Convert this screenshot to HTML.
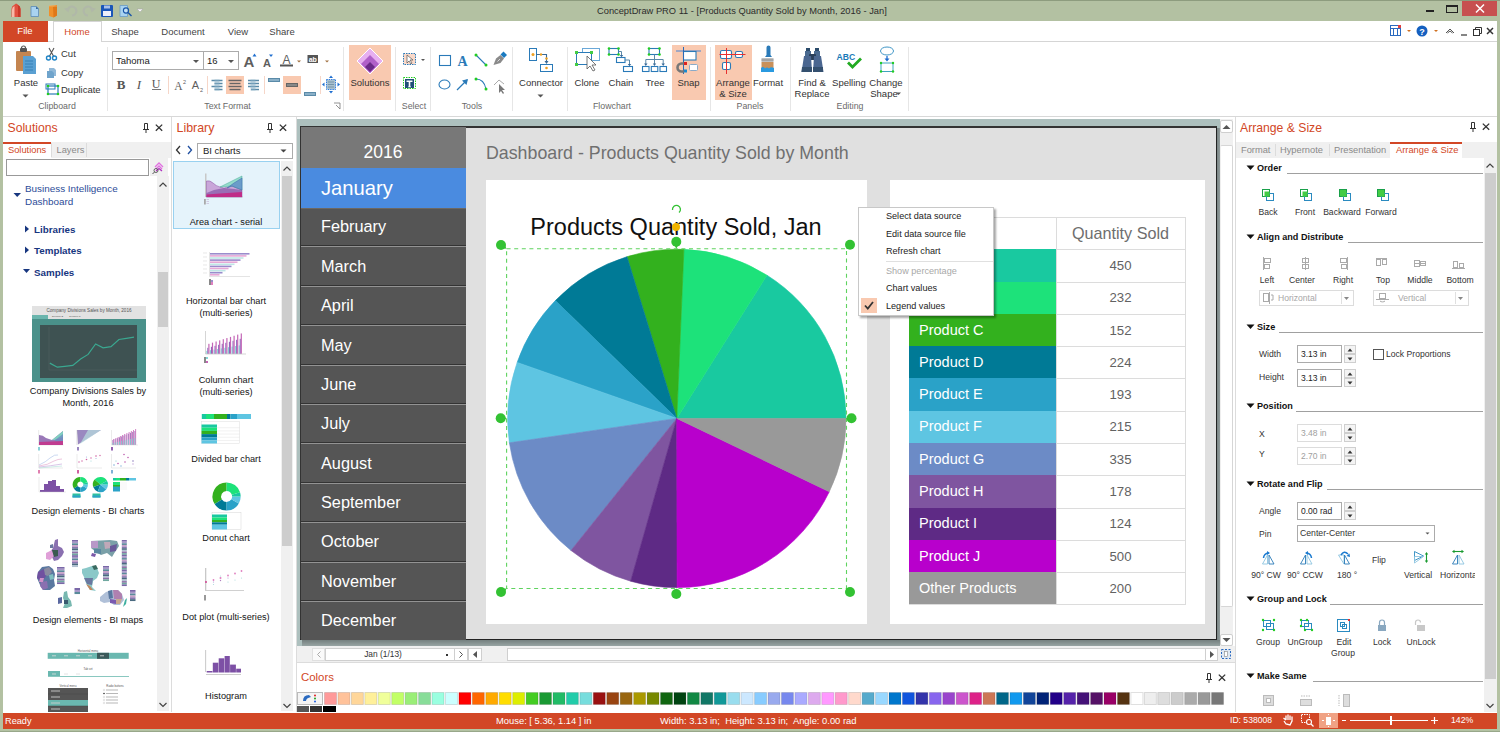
<!DOCTYPE html><html><head><meta charset="utf-8"><style>
*{margin:0;padding:0;box-sizing:border-box}
html,body{width:1500px;height:732px;overflow:hidden;background:#fff;font-family:"Liberation Sans",sans-serif}
.a{position:absolute}
.t{position:absolute;white-space:nowrap;font-family:"Liberation Sans",sans-serif}
svg{position:absolute;overflow:visible}
</style></head><body>
<div class="a" style="left:0px;top:0px;width:1500px;height:732px;background:#b3c1a2"></div>
<div class="a" style="left:0px;top:0px;width:1500px;height:1px;background:#8d9c7e"></div>
<div class="t" style="left:597px;top:5.0px;font-size:9.3px;line-height:12px;color:#2b2b2b;text-align:left;">ConceptDraw PRO 11 - [Products Quantity Sold by Month, 2016 - Jan]</div>
<div class="a" style="left:1426px;top:10px;width:8px;height:2px;background:#222"></div>
<div class="a" style="left:1446px;top:5px;width:12px;height:8px;border:1px solid #222;border-top-width:2px"></div>
<div class="a" style="left:1462px;top:1px;width:35px;height:15px;background:#c75050"></div>
<svg style="left:1475px;top:4px" width="10" height="9"><path fill="none" d="M1 0.5L9 8.5M9 0.5L1 8.5" stroke="#fff" stroke-width="1.5"/></svg>
<div class="a" style="left:3px;top:21px;width:1494px;height:96px;background:#fff"></div>
<div class="a" style="left:3px;top:41px;width:1494px;height:1px;background:#d5d5d5"></div>
<div class="a" style="left:3px;top:21.4px;width:44.5px;height:20.2px;background:#d24726"></div>
<div class="t" style="left:-75.0px;top:25.0px;width:200px;font-size:9.5px;line-height:12px;color:#fff;text-align:center;">File</div>
<div class="a" style="left:53px;top:21.4px;width:48.5px;height:20.6px;background:#fff;border:1px solid #d5d5d5;border-bottom:none"></div>
<div class="a" style="left:54px;top:41px;width:46.5px;height:1px;background:#fff"></div>
<div class="t" style="left:-23.0px;top:25.5px;width:200px;font-size:9.5px;line-height:12px;color:#d24726;text-align:center;">Home</div>
<div class="t" style="left:25.0px;top:25.5px;width:200px;font-size:9.5px;line-height:12px;color:#444;text-align:center;">Shape</div>
<div class="t" style="left:83.0px;top:25.5px;width:200px;font-size:9.5px;line-height:12px;color:#444;text-align:center;">Document</div>
<div class="t" style="left:138.0px;top:25.5px;width:200px;font-size:9.5px;line-height:12px;color:#444;text-align:center;">View</div>
<div class="t" style="left:182.0px;top:25.5px;width:200px;font-size:9.5px;line-height:12px;color:#444;text-align:center;">Share</div>
<div class="a" style="left:3px;top:116px;width:1494px;height:1px;background:#d8d8d8"></div>
<svg style="left:0;top:0" width="160" height="21"><path d="M11.5 17L11.5 9Q11.5 6 14 5L16 3.5L18 5Q20.5 6 20.5 9V17Z" fill="#e05040"/><path d="M12 17V9.5Q12 7 14.5 6V17Z" fill="#f8b8a8"/><path d="M16 3.5L18 5Q20.5 6 20.5 9V17H18V6Z" fill="#c83828"/><path d="M31 6.5H36.5L38.5 8.5V16.5H31Z" fill="#a9d3f0" stroke="#5a8cb8" stroke-width="0.8"/><path d="M36 6.5V9H38.5Z" fill="#3a6a98"/><path d="M49 6L57 5V15.5L53.5 17.5L49 16Z" fill="#f0902a"/><path d="M53 7L57 5V15.5L53.5 17.5Z" fill="#e07818"/><path fill="none" d="M49 6H57" stroke="#f8b060" stroke-width="0.8"/><path d="M67.5 10A4.5 4.5 0 1 1 72 15.5" fill="none" stroke="#b0b8a8" stroke-width="2.2"/><path d="M64 8.5L68.5 12.5L70 7.5Z" fill="#b0b8a8"/><path d="M92.5 10A4.5 4.5 0 1 0 88 15.5" fill="none" stroke="#b0b8a8" stroke-width="2.2"/><path d="M96 8.5L91.5 12.5L90 7.5Z" fill="#b0b8a8"/><rect x="101" y="5" width="12" height="12" rx="1" fill="#1a56b8"/><rect x="103" y="11" width="8" height="5" fill="#eef0fa"/><rect x="104" y="5.5" width="6" height="3" fill="#a8c0e8"/><path d="M120 5.5H127.5V16.5H120Z" fill="#a9d3f0" stroke="#6a9cc4" stroke-width="0.8"/><circle cx="126" cy="10.5" r="2.6" fill="#fff" fill-opacity="0.3" stroke="#1a56a8" stroke-width="1.1"/><path fill="none" d="M128 12.5L131.5 16" stroke="#1a56a8" stroke-width="1.4"/><path d="M137 9H143L140 12Z" fill="#f8f8f8" stroke="#aaa" stroke-width="0.6"/></svg>
<svg style="left:1380px;top:21px" width="117" height="20"><rect x="10.5" y="4.5" width="10" height="10" fill="#fff" stroke="#2a6ac0" stroke-width="1"/><path fill="none" d="M10.5 7.5H20.5M13.5 7.5V14.5M17.5 7.5V14.5" stroke="#2a6ac0"/><rect x="18" y="4" width="3" height="3" fill="#e04040"/><path d="M27 9H31L29 11Z" fill="#d07020"/><circle cx="42" cy="10" r="5.5" fill="#1560c0"/><text x="42" y="13.5" font-size="9" font-weight="bold" fill="#fff" text-anchor="middle" font-family="Liberation Sans">?</text><path d="M54 9H58L56 11Z" fill="#d07020"/><path d="M66 12L70 8L74 12M67.5 12L70 10L72.5 12" fill="none" stroke="#555" stroke-width="1"/><path fill="none" d="M81 14H87" stroke="#333" stroke-width="1.2"/><rect x="93.5" y="8.5" width="6" height="6" fill="none" stroke="#333"/><path d="M95.5 8.5V6.5H101.5V12.5H99.5" fill="none" stroke="#333"/><path fill="none" d="M107 7L113 13M113 7L107 13" stroke="#333" stroke-width="1.5"/></svg>
<svg style="left:0;top:41px" width="110" height="60"><rect x="16" y="10" width="15" height="20" rx="1" fill="#c48550"/><rect x="20" y="7" width="7" height="4" rx="1" fill="#555"/><path d="M21.5 7A2 2 0 0 1 25.5 7" fill="none" stroke="#555" stroke-width="1.2"/><path d="M23 15H33L36 18V33H23Z" fill="#5aa0d2"/><path fill="none" d="M25 20H33M25 23H33M25 26H33M25 29H33" stroke="#2f7ab0" stroke-width="0.8"/><path fill="none" d="M49 7L54 16M54 7L49 16" stroke="#555" stroke-width="1.1"/><circle cx="48.5" cy="17" r="2" fill="none" stroke="#1f84c6" stroke-width="1.4"/><circle cx="54.5" cy="17" r="2" fill="none" stroke="#1f84c6" stroke-width="1.4"/><path d="M49 27H54L56 29V35H49Z" fill="#8fb8d8"/><path d="M47 30H52L54 32V37H47Z" fill="#6fa4cc"/><rect x="48" y="45" width="10" height="8" fill="none" stroke="#2a7ab8" stroke-width="1.2"/><rect x="46" y="43" width="9" height="5" fill="none" stroke="#2a7ab8" stroke-width="1"/><circle cx="48" cy="45" r="1.3" fill="#2c2"/><circle cx="58" cy="45" r="1.3" fill="#2c2"/><circle cx="48" cy="53" r="1.3" fill="#2c2"/><circle cx="58" cy="53" r="1.3" fill="#2c2"/></svg>
<div class="t" style="left:-74.0px;top:77.0px;width:200px;font-size:9.5px;line-height:12px;color:#333;text-align:center;">Paste</div>
<svg style="left:22px;top:94px" width="8" height="5"><path d="M0.5 0.5H6.5L3.5 3.5Z" fill="#555"/></svg>
<div class="t" style="left:61px;top:48.0px;font-size:9.5px;line-height:12px;color:#333;text-align:left;">Cut</div>
<div class="t" style="left:61px;top:66.5px;font-size:9.5px;line-height:12px;color:#333;text-align:left;">Copy</div>
<div class="t" style="left:61px;top:84.0px;font-size:9.5px;line-height:12px;color:#333;text-align:left;">Duplicate</div>
<div class="t" style="left:-43.0px;top:100.5px;width:200px;font-size:8.8px;line-height:11px;color:#6a6a6a;text-align:center;">Clipboard</div>
<div class="a" style="left:107px;top:47px;width:1px;height:64px;background:#e6e6e6"></div>
<div class="a" style="left:112px;top:51px;width:92px;height:19px;border:1px solid #ababab;background:#fff"></div>
<div class="t" style="left:116px;top:54.5px;font-size:9.5px;line-height:12px;color:#222;text-align:left;">Tahoma</div>
<div class="a" style="left:203px;top:51px;width:36px;height:19px;border:1px solid #ababab;background:#fff"></div>
<div class="t" style="left:207px;top:54.5px;font-size:9.5px;line-height:12px;color:#222;text-align:left;">16</div>
<svg style="left:0;top:41px" width="345" height="60"><path d="M193 19H199L196 22Z" fill="#555"/><path d="M228 19H234L231 22Z" fill="#555"/><text x="249" y="25.5" font-size="15" font-weight="bold" fill="#5e5e5e" text-anchor="middle" font-family="Liberation Sans">A</text><path d="M252.5 15.5L254.5 12.5L256.5 15.5Z" fill="#1f6fd0"/><text x="267" y="25.5" font-size="11" font-weight="bold" fill="#5e5e5e" text-anchor="middle" font-family="Liberation Sans">A</text><path d="M269 13.5H273L271 16Z" fill="#1f6fd0"/><text x="286.5" y="23" font-size="12" fill="#5e5e5e" text-anchor="middle" font-family="Liberation Sans">A</text><rect x="280" y="23.5" width="13" height="2" fill="#555"/><path d="M297 19.5H301L299 21.5Z" fill="#a07040"/><rect x="307.5" y="14" width="10.5" height="8" fill="#555"/><text x="312.8" y="20.6" font-size="7" font-weight="bold" fill="#fff" text-anchor="middle" font-family="Liberation Sans">ab</text><path d="M325 19.5H329L327 21.5Z" fill="#a07040"/><text x="121" y="48" font-size="13" font-weight="bold" fill="#555" text-anchor="middle" font-family="Liberation Serif">B</text><text x="139" y="48" font-size="13" font-style="italic" fill="#555" text-anchor="middle" font-family="Liberation Serif">I</text><text x="156" y="47" font-size="12" fill="#555" text-anchor="middle" font-family="Liberation Serif">U</text><rect x="152" y="48" width="9" height="1" fill="#777"/><rect x="168" y="35" width="1" height="18" fill="#f6d6c8"/><rect x="207" y="35" width="1" height="18" fill="#f6d6c8"/><rect x="264" y="35" width="1" height="18" fill="#f6d6c8"/><rect x="320" y="35" width="1" height="18" fill="#f6d6c8"/><text x="178.5" y="49" font-size="11.5" fill="#5e5e5e" text-anchor="middle" font-family="Liberation Serif">A</text><text x="183" y="42.5" font-size="5.5" fill="#5e5e5e" font-family="Liberation Sans">2</text><text x="195.5" y="47.5" font-size="11" fill="#5e5e5e" text-anchor="middle" font-family="Liberation Sans">A</text><text x="200" y="51" font-size="5.5" fill="#5e5e5e" font-family="Liberation Sans">2</text><rect x="226" y="35" width="18" height="18" fill="#f9c9b0"/><rect x="283" y="35" width="18" height="18" fill="#f9c9b0"/><path fill="none" d="M211.5 39.5H222.5M214.5 42.5H222.5M211.5 45.5H222.5M214.5 48.5H222.5" stroke="#5a8aa8" stroke-width="1.5"/><path fill="none" d="M217 38.5V49.5" stroke="#8ab0c8" stroke-width="5" opacity="0.5"/><path fill="none" d="M228.5 39.5H241.5M229.5 42.5H240.5M228.5 45.5H241.5M229.5 48.5H240.5" stroke="#666" stroke-width="1.5"/><path fill="none" d="M248 39.5H259M248 42.5H259M248 45.5H259M251 48.5H259" stroke="#5a8aa8" stroke-width="1.5"/><path fill="none" d="M253 38.5V49.5" stroke="#8ab0c8" stroke-width="5" opacity="0.5"/><rect x="268.5" y="37.5" width="11" height="3" fill="#8ab0c8" stroke="#5a8aa8" stroke-width="1"/><rect x="286.5" y="42.5" width="11" height="3" fill="#888" stroke="#666" stroke-width="1"/><rect x="304.5" y="51.5" width="11" height="3" fill="#8ab0c8" stroke="#5a8aa8" stroke-width="1"/><rect x="326.5" y="38.5" width="9" height="10" fill="#a8c0d0" stroke="#2a7ae0" stroke-dasharray="1.3 1"/><path fill="none" d="M328 41H334M328 43.5H334M328 46H334" stroke="#6a8aa0" stroke-width="0.8"/><path d="M331 34.5L329 37H333ZM331 52.5L329 50H333ZM322 43.5L324.5 41.5V45.5ZM340 43.5L337.5 41.5V45.5Z" fill="#1f6fd0"/><path d="M334 62H340V68" fill="none" stroke="#777" stroke-width="0.8"/><path fill="none" d="M336 64L340 68" stroke="#777" stroke-width="0.8"/></svg>
<div class="t" style="left:127.5px;top:100.5px;width:200px;font-size:8.8px;line-height:11px;color:#6a6a6a;text-align:center;">Text Format</div>
<div class="a" style="left:343px;top:47px;width:1px;height:64px;background:#e6e6e6"></div>
<div class="a" style="left:349px;top:45px;width:42px;height:55px;background:#f9c9b0"></div>
<svg style="left:349px;top:45px" width="42" height="55"><path d="M21 3L34 16L21 29L8 16Z" fill="#e7b0f0" stroke="#fff" stroke-width="1"/><path d="M21 10L30 19L21 28L12 19Z" fill="#b060c8"/><path d="M21 17L26 22L21 27L16 22Z" fill="#6a2a88"/></svg>
<div class="t" style="left:270.0px;top:77.0px;width:200px;font-size:9.5px;line-height:12px;color:#333;text-align:center;">Solutions</div>
<div class="a" style="left:395px;top:47px;width:1px;height:64px;background:#e6e6e6"></div>
<svg style="left:0;top:41px" width="900" height="60"><rect x="403.5" y="12.5" width="12" height="11" fill="#f9d8c8" stroke="#2a7ab8" stroke-dasharray="1.5 1"/><path d="M407 14L407 22L409 20L411 23L412 22L410 19L413 19Z" fill="#fff" stroke="#555" stroke-width="0.7"/><path d="M421 18H425L423 20Z" fill="#555"/><rect x="403.5" y="36.5" width="12" height="11" fill="#fff" stroke="#2c2" stroke-dasharray="1.5 1"/><rect x="405" y="38" width="9" height="9" fill="#1f4f78"/><path d="M406.5 39.5H412.5V41H410.3V45.5H411V46.2H408V45.5H408.7V41H406.5Z" fill="#fff"/><rect x="439.5" y="14.5" width="11" height="10" fill="none" stroke="#2a7ab8" stroke-width="1.1"/><text x="462.5" y="25" font-size="14" font-weight="bold" fill="#2a7ab8" text-anchor="middle" font-family="Liberation Serif">A</text><path fill="none" d="M476 14L486 24" stroke="#2a7ab8" stroke-width="1.1"/><circle cx="476" cy="14" r="1.5" fill="#2c2"/><circle cx="486" cy="24" r="1.5" fill="#2c2"/><path d="M493.5 24L496 17.5L500.5 14L504 17.5L500.5 22Z" fill="#8a8a8a"/><path fill="none" d="M497.5 20.5L500 18" stroke="#fff" stroke-width="0.7"/><path d="M500.5 13.5L503.5 10.5L507 14L504 17Z" fill="#1a7ac0"/><ellipse cx="444.5" cy="43.5" rx="5.5" ry="4.5" fill="none" stroke="#2a7ab8" stroke-width="1.1"/><path fill="none" d="M457 49L467 39" stroke="#2a7ab8" stroke-width="1.3"/><path d="M468 38L462 39.5L466.5 44Z" fill="#2a7ab8"/><path d="M476 38Q484 38 486 48" fill="none" stroke="#2a7ab8" stroke-width="1.1"/><circle cx="476" cy="38" r="1.5" fill="#2c2"/><circle cx="486" cy="48" r="1.5" fill="#2c2"/><path d="M494 44L499 39L504 43" fill="none" stroke="#aaa" stroke-width="1"/><path d="M499 43L499 52L501 50L503 53L504 52L502 49L505 49Z" fill="#777"/><rect x="529.5" y="7.5" width="7" height="12" fill="#fff" stroke="#2a7ab8"/><rect x="540.5" y="23.5" width="12" height="7" fill="#fff" stroke="#2a7ab8"/><path d="M536.5 13.5H546.5V21" fill="none" stroke="#3a6a98" stroke-width="1.1"/><path d="M544.5 20H548.5L546.5 23Z" fill="#3a6a98"/><circle cx="533" cy="13.5" r="1.5" fill="#f0a020"/><circle cx="546.5" cy="27" r="1.3" fill="#f0a020"/><circle cx="541" cy="13.5" r="1.2" fill="#f0a020"/><circle cx="546.5" cy="17.5" r="1.2" fill="#f0a020"/></svg>
<div class="t" style="left:314.0px;top:100.5px;width:200px;font-size:8.8px;line-height:11px;color:#6a6a6a;text-align:center;">Select</div>
<div class="a" style="left:430px;top:47px;width:1px;height:64px;background:#e6e6e6"></div>
<div class="t" style="left:372.0px;top:100.5px;width:200px;font-size:8.8px;line-height:11px;color:#6a6a6a;text-align:center;">Tools</div>
<div class="a" style="left:512px;top:47px;width:1px;height:64px;background:#e6e6e6"></div>
<div class="t" style="left:441.0px;top:77.0px;width:200px;font-size:9.5px;line-height:12px;color:#333;text-align:center;">Connector</div>
<svg style="left:537px;top:94px" width="8" height="5"><path d="M0.5 0.5H6.5L3.5 3.5Z" fill="#555"/></svg>
<div class="a" style="left:567px;top:47px;width:1px;height:64px;background:#e6e6e6"></div>
<div class="a" style="left:672px;top:45px;width:34px;height:55px;background:#f9c9b0"></div>
<div class="a" style="left:715px;top:45px;width:37px;height:55px;background:#f9c9b0"></div>
<svg style="left:0;top:41px" width="910" height="60"><rect x="582.5" y="7.5" width="17" height="12" fill="none" stroke="#6aa8d8" stroke-width="1"/><rect x="576.5" y="11.5" width="15" height="12" fill="#fff" stroke="#2a7ab8"/><rect x="575" y="10" width="3" height="3" fill="#4c4"/><rect x="590" y="10" width="3" height="3" fill="#4c4"/><rect x="575" y="22" width="3" height="3" fill="#4c4"/><path d="M587 15L587 28L590 25L593 30L595 29L592 24L596 24Z" fill="#fff" stroke="#555" stroke-width="0.8"/><rect x="609" y="7.5" width="9.5" height="6" fill="#fff" stroke="#2a7ab8" stroke-width="1.1"/><rect x="616.5" y="16.5" width="8.5" height="5" fill="#fff" stroke="#2a7ab8" stroke-width="1.1"/><rect x="623.5" y="25.5" width="9" height="5" fill="#fff" stroke="#2a7ab8" stroke-width="1.1"/><path d="M618.5 10.5H621.5V14.5M625 19H629.5V23.5" fill="none" stroke="#5a88a8" stroke-width="1"/><path d="M619.8 14L621.5 16.3L623.2 14ZM627.8 23L629.5 25.3L631.2 23Z" fill="#3a6a98"/><circle cx="609" cy="7.5" r="1.3" fill="#2c2"/><circle cx="618.5" cy="7.5" r="1.3" fill="#2c2"/><circle cx="609" cy="13.5" r="1.3" fill="#2c2"/><circle cx="618.5" cy="13.5" r="1.3" fill="#2c2"/><rect x="649" y="7.5" width="10.5" height="6" fill="#fff" stroke="#2a7ab8" stroke-width="1.1"/><rect x="642.5" y="25.5" width="6.5" height="5" fill="#fff" stroke="#2a7ab8" stroke-width="1.1"/><rect x="651.3" y="25.5" width="6.5" height="5" fill="#fff" stroke="#2a7ab8" stroke-width="1.1"/><rect x="660" y="25.5" width="6.5" height="5" fill="#fff" stroke="#2a7ab8" stroke-width="1.1"/><path d="M654.5 13.5V23M645.8 23V18.5H663.2V23" fill="none" stroke="#5a88a8" stroke-width="1"/><path d="M644.1 22.5L645.8 25L647.5 22.5ZM652.8 22.5L654.5 25L656.2 22.5ZM661.5 22.5L663.2 25L664.9 22.5Z" fill="#3a6a98"/><circle cx="649" cy="7.5" r="1.3" fill="#2c2"/><circle cx="659.5" cy="7.5" r="1.3" fill="#2c2"/><circle cx="649" cy="13.5" r="1.3" fill="#2c2"/><circle cx="659.5" cy="13.5" r="1.3" fill="#2c2"/><path fill="none" d="M676 10H701" stroke="#5a8ad0" stroke-width="1.1"/><rect x="683.5" y="10.5" width="12.5" height="8.5" fill="#fff" stroke="#2a7ab8" stroke-width="1.1"/><path fill="none" d="M683.5 6V33" stroke="#2a6ab8" stroke-width="1"/><rect x="689.5" y="23.5" width="8" height="6" rx="1" fill="#fff" stroke="#8aaac8" stroke-width="1"/><path d="M684 22.5H681.5A4 4 0 0 0 681.5 30.5H684" fill="none" stroke="#777" stroke-width="2.6"/><rect x="684" y="21" width="3" height="3" fill="#e02020"/><rect x="684" y="28.5" width="3" height="3" fill="#1a8ad0"/><rect x="720.5" y="9.5" width="11" height="8" rx="1.5" fill="#fff" stroke="#2a7ab8" stroke-width="1.1"/><rect x="735.5" y="10.5" width="7" height="6" rx="1.5" fill="#fff" stroke="#2a7ab8" stroke-width="1.1"/><rect x="722.5" y="21.5" width="8" height="7" rx="1.5" fill="#fff" stroke="#2a7ab8" stroke-width="1.1"/><path fill="none" d="M719.5 13.5H745.5M726.5 7V33" stroke="#e83030" stroke-width="1"/><path d="M766.5 6.5A2 2 0 0 1 770.5 6.5V14L772 16H765L766.5 14Z" fill="#2a7ab8"/><rect x="761.5" y="17" width="12" height="4" fill="#c0c0c0"/><rect x="761.5" y="18.5" width="12" height="1" fill="#888"/><path d="M761.5 21H773.5V30H761.5Z" fill="#c8905a"/><path d="M761 27Q763 25 765 27.5Q767 25.5 769 27.5Q771 25.5 774 27V31H761Z" fill="#2a9ae0"/><rect x="806" y="7" width="4" height="3" fill="#2a4a6a"/><rect x="815" y="7" width="4" height="3" fill="#2a4a6a"/><rect x="805" y="10" width="6" height="5" fill="#4a6a90"/><rect x="814" y="10" width="6" height="5" fill="#4a6a90"/><rect x="809" y="13" width="7" height="6" rx="1" fill="#2a3f5a"/><path d="M804 15H811L812 31H801.5Z" fill="#4a6690"/><path d="M814 15H821L823.5 31H813Z" fill="#4a6690"/><path d="M802 26H812V31H801.5ZM813 26H823V31H813Z" fill="#34506f"/><text x="836.5" y="18.5" font-size="8.6" font-weight="bold" fill="#1a7ab8" font-family="Liberation Sans">ABC</text><path d="M848 21.5L852.5 26L861 17.5" fill="none" stroke="#22aa22" stroke-width="2.8"/><ellipse cx="887" cy="10" rx="6.5" ry="4" fill="none" stroke="#2a8ac0" stroke-width="0.9"/><path fill="none" d="M887 15V19" stroke="#1a6ad0" stroke-width="1.3"/><path d="M884.5 17.5H889.5L887 20.5Z" fill="#1a6ad0"/><rect x="881" y="22" width="12" height="8.5" fill="none" stroke="#2a9ab8" stroke-width="0.9"/><circle cx="881" cy="22" r="1.2" fill="#2c2"/><circle cx="893" cy="22" r="1.2" fill="#2c2"/><circle cx="881" cy="30.5" r="1.2" fill="#2c2"/><circle cx="893" cy="30.5" r="1.2" fill="#2c2"/></svg>
<div class="t" style="left:487.0px;top:77.0px;width:200px;font-size:9.5px;line-height:12px;color:#333;text-align:center;">Clone</div>
<div class="t" style="left:521.0px;top:77.0px;width:200px;font-size:9.5px;line-height:12px;color:#333;text-align:center;">Chain</div>
<div class="t" style="left:555.0px;top:77.0px;width:200px;font-size:9.5px;line-height:12px;color:#333;text-align:center;">Tree</div>
<div class="t" style="left:588.5px;top:77.0px;width:200px;font-size:9.5px;line-height:12px;color:#333;text-align:center;">Snap</div>
<div class="t" style="left:512.0px;top:100.5px;width:200px;font-size:8.8px;line-height:11px;color:#6a6a6a;text-align:center;">Flowchart</div>
<div class="a" style="left:710px;top:47px;width:1px;height:64px;background:#e6e6e6"></div>
<div class="t" style="left:633.0px;top:77.0px;width:200px;font-size:9.5px;line-height:12px;color:#333;text-align:center;">Arrange</div>
<div class="t" style="left:633.0px;top:87.5px;width:200px;font-size:9.5px;line-height:12px;color:#333;text-align:center;">&amp; Size</div>
<div class="t" style="left:668.0px;top:77.0px;width:200px;font-size:9.5px;line-height:12px;color:#333;text-align:center;">Format</div>
<div class="t" style="left:650.0px;top:100.5px;width:200px;font-size:8.8px;line-height:11px;color:#6a6a6a;text-align:center;">Panels</div>
<div class="a" style="left:790px;top:47px;width:1px;height:64px;background:#e6e6e6"></div>
<div class="t" style="left:712.0px;top:77.0px;width:200px;font-size:9.5px;line-height:12px;color:#333;text-align:center;">Find &amp;</div>
<div class="t" style="left:712.0px;top:87.5px;width:200px;font-size:9.5px;line-height:12px;color:#333;text-align:center;">Replace</div>
<div class="t" style="left:749.0px;top:77.0px;width:200px;font-size:9.5px;line-height:12px;color:#333;text-align:center;">Spelling</div>
<div class="t" style="left:786.0px;top:77.0px;width:200px;font-size:9.5px;line-height:12px;color:#333;text-align:center;">Change</div>
<div class="t" style="left:784.0px;top:87.5px;width:200px;font-size:9.5px;line-height:12px;color:#333;text-align:center;">Shape</div>
<svg style="left:896px;top:92px" width="6" height="4"><path d="M0 0.5H5L2.5 3Z" fill="#555"/></svg>
<div class="t" style="left:750.0px;top:100.5px;width:200px;font-size:8.8px;line-height:11px;color:#6a6a6a;text-align:center;">Editing</div>
<div class="a" style="left:908px;top:47px;width:1px;height:64px;background:#e6e6e6"></div>
<div class="a" style="left:3px;top:117px;width:1494px;height:596px;background:#fff"></div>
<div class="a" style="left:171px;top:117px;width:1px;height:595px;background:#dcdcdc"></div>
<div class="a" style="left:296px;top:117px;width:1px;height:595px;background:#dcdcdc"></div>
<div class="a" style="left:1235px;top:117px;width:1px;height:595px;background:#dcdcdc"></div>
<div class="t" style="left:7.5px;top:119.5px;font-size:12.2px;line-height:16px;color:#d24726;text-align:left;">Solutions</div>
<svg style="left:143px;top:122.5px" width="22" height="12"><path d="M1.5 0.5H4.5V6.5H1.5Z" fill="none" stroke="#333" stroke-width="1"/><path fill="none" d="M0 6.5H6M3 6.5V10" stroke="#333" stroke-width="1"/><path fill="none" d="M12.8 1.6L19.2 7.8M19.2 1.6L12.8 7.8" stroke="#333" stroke-width="1.3"/></svg>
<div class="a" style="left:3px;top:142px;width:168px;height:16px;background:#f0f0f0"></div>
<div class="a" style="left:3px;top:142px;width:48px;height:16px;background:#fff;border-top:2px solid #d24726"></div>
<div class="t" style="left:8px;top:144.0px;font-size:9.3px;line-height:12px;color:#d24726;text-align:left;">Solutions</div>
<div class="a" style="left:51px;top:143px;width:1px;height:14px;background:#dcdcdc"></div>
<div class="t" style="left:56.5px;top:144.0px;font-size:9.3px;line-height:12px;color:#8a8a8a;text-align:left;">Layers</div>
<div class="a" style="left:86px;top:143px;width:1px;height:14px;background:#dcdcdc"></div>
<div class="a" style="left:6px;top:159px;width:143px;height:16.5px;background:#fff;border:1px solid #999"></div>
<div class="a" style="left:150px;top:158px;width:18px;height:18px;background:#f0f0f0"></div>
<svg style="left:150px;top:158px" width="18" height="18"><path d="M5 9L9 5L13 9M6 11L9 8L12 11" fill="none" stroke="#e070e0" stroke-width="1.3"/><path d="M6 13L9 10.5L12 13" fill="none" stroke="#b030c0" stroke-width="1.3"/><circle cx="6" cy="12.5" r="2" fill="none" stroke="#555" stroke-width="0.9"/><path fill="none" d="M4.5 14L2.5 16" stroke="#555" stroke-width="1"/></svg>
<div class="a" style="left:157px;top:176px;width:12px;height:535px;background:#f0f0f0"></div>
<div class="a" style="left:158px;top:272px;width:10px;height:55px;background:#cdcdcd"></div>
<svg style="left:158px;top:181px" width="10" height="8"><path d="M1.5 5.5L5 2L8.5 5.5" fill="none" stroke="#444" stroke-width="1.2"/></svg>
<svg style="left:158px;top:701px" width="10" height="8"><path d="M1.5 2L5 5.5L8.5 2" fill="none" stroke="#444" stroke-width="1.2"/></svg>
<svg style="left:0;top:0" width="40" height="280"><path d="M13.5 193H21L17.2 197Z" fill="#17367f"/><path d="M25 225.5V232.5L29 229Z" fill="#17367f"/><path d="M25 246.5V253.5L29 250Z" fill="#17367f"/><path d="M23 269H30L26.5 273Z" fill="#17367f"/></svg>
<div class="t" style="left:25px;top:181.5px;font-size:9.9px;line-height:13px;color:#2c4c98;text-align:left;">Business Intelligence</div>
<div class="t" style="left:25px;top:195.0px;font-size:9.9px;line-height:13px;color:#2c4c98;text-align:left;">Dashboard</div>
<div class="t" style="left:34px;top:222.5px;font-size:9.8px;line-height:13px;color:#17367f;text-align:left;font-weight:bold">Libraries</div>
<div class="t" style="left:34px;top:244.0px;font-size:9.8px;line-height:13px;color:#17367f;text-align:left;font-weight:bold">Templates</div>
<div class="t" style="left:34px;top:265.5px;font-size:9.8px;line-height:13px;color:#17367f;text-align:left;font-weight:bold">Samples</div>
<div class="a" style="left:32px;top:306px;width:114px;height:76px;background:#4a918a"></div>
<div class="a" style="left:32px;top:306px;width:114px;height:13px;background:#e2e2e2"></div>
<div class="t" style="left:32px;top:307px;width:114px;font-size:4.6px;line-height:8px;text-align:center;color:#555">Company Divisions Sales by Month, 2016</div>
<div class="a" style="left:32px;top:315px;width:16px;height:4px;background:#6ab5ad"></div>
<div class="t" style="left:52px;top:314.5px;font-size:2.5px;line-height:4px;color:#555">Division B &nbsp;&nbsp;&nbsp;&nbsp;&nbsp;&nbsp;&nbsp; Division C</div>
<div class="a" style="left:40px;top:325px;width:97px;height:53px;background:#3e5252"></div>
<svg style="left:0;top:0" width="160" height="400"><polyline points="49.8,363.1 57.3,367.2 64.8,366.4 72.8,365.4 80.6,359.1 88.1,354.4 95.6,343.9 103.1,347.8 111.0,346.7 118.9,339.5 126.4,338.3 134.0,337.1" fill="none" stroke="#3aa890" stroke-width="1.2"/><path d="M49 327V370H137" fill="none" stroke="#5a6a6a" stroke-width="0.4"/></svg>
<div class="t" style="left:-12.0px;top:384.5px;width:200px;font-size:9.2px;line-height:12px;color:#141414;text-align:center;">Company Divisions Sales by</div>
<div class="t" style="left:-12.0px;top:396.5px;width:200px;font-size:9.2px;line-height:12px;color:#141414;text-align:center;">Month, 2016</div>
<svg style="left:0;top:0" width="160" height="712"><path fill="none" d="M38.7 445V430M38.7 445H63.5" stroke="#ccc" stroke-width="0.4"/><path d="M39 435Q43 435 46 438L52 440L63 431V445H39Z" fill="#9a78b8"/><path d="M52 440L63 431V437L55 440Z" fill="#80d0c0"/><path d="M55 440L63 434V445H55Z" fill="#6a90c0" opacity="0.8"/><path d="M39 442L63 441V445H39Z" fill="#c03c90"/><rect x="38" y="447" width="2" height="3.5" fill="#8ad0d8"/><path d="M77 430H101L78 444.5Z" fill="#9a88c0"/><path d="M88 430H101L80 444Z" fill="#b8e0e0" opacity="0.7"/><path fill="none" d="M77 430V445" stroke="#aaa" stroke-width="0.4"/><rect x="77" y="447" width="2" height="3.5" fill="#9a88c0"/><rect x="112.5" y="440.0" width="0.8" height="5.0" fill="#9060b0"/><rect x="113.3" y="439.0" width="0.8" height="6.0" fill="#c866b8"/><rect x="112.5" y="443.0" width="0.8" height="2.0" fill="#80d0d0"/><rect x="114.7" y="439.1" width="0.8" height="5.9" fill="#9060b0"/><rect x="115.5" y="438.0" width="0.8" height="7.0" fill="#c866b8"/><rect x="114.7" y="442.5" width="0.8" height="2.5" fill="#80d0d0"/><rect x="116.9" y="438.2" width="0.8" height="6.8" fill="#9060b0"/><rect x="117.7" y="437.0" width="0.8" height="8.0" fill="#c866b8"/><rect x="116.9" y="442.0" width="0.8" height="3.0" fill="#80d0d0"/><rect x="119.1" y="437.3" width="0.8" height="7.7" fill="#9060b0"/><rect x="119.9" y="436.0" width="0.8" height="9.0" fill="#c866b8"/><rect x="119.1" y="441.5" width="0.8" height="3.5" fill="#80d0d0"/><rect x="121.3" y="436.4" width="0.8" height="8.6" fill="#9060b0"/><rect x="122.1" y="435.0" width="0.8" height="10.0" fill="#c866b8"/><rect x="121.3" y="441.0" width="0.8" height="4.0" fill="#80d0d0"/><rect x="123.5" y="435.5" width="0.8" height="9.5" fill="#9060b0"/><rect x="124.3" y="434.0" width="0.8" height="11.0" fill="#c866b8"/><rect x="123.5" y="440.5" width="0.8" height="4.5" fill="#80d0d0"/><rect x="125.7" y="434.6" width="0.8" height="10.4" fill="#9060b0"/><rect x="126.5" y="433.0" width="0.8" height="12.0" fill="#c866b8"/><rect x="125.7" y="440.0" width="0.8" height="5.0" fill="#80d0d0"/><rect x="127.9" y="433.7" width="0.8" height="11.3" fill="#9060b0"/><rect x="128.7" y="432.0" width="0.8" height="13.0" fill="#c866b8"/><rect x="127.9" y="439.5" width="0.8" height="5.5" fill="#80d0d0"/><rect x="130.1" y="432.8" width="0.8" height="12.2" fill="#9060b0"/><rect x="130.9" y="431.0" width="0.8" height="14.0" fill="#c866b8"/><rect x="130.1" y="439.0" width="0.8" height="6.0" fill="#80d0d0"/><rect x="132.3" y="431.9" width="0.8" height="13.1" fill="#9060b0"/><rect x="133.1" y="430.0" width="0.8" height="15.0" fill="#c866b8"/><rect x="132.3" y="438.5" width="0.8" height="6.5" fill="#80d0d0"/><rect x="134.5" y="431.0" width="0.8" height="14.0" fill="#9060b0"/><rect x="135.3" y="429.0" width="0.8" height="16.0" fill="#c866b8"/><rect x="134.5" y="438.0" width="0.8" height="7.0" fill="#80d0d0"/><path fill="none" d="M111.5 430V445H138" stroke="#ccc" stroke-width="0.4"/><rect x="111" y="447" width="2" height="3.5" fill="#9060b0"/><path fill="none" d="M38.7 468V454M38.7 468H63" stroke="#ccc" stroke-width="0.4"/><path fill="none" d="M39 465Q46 462 50 458Q55 454 58 455" stroke="#a8c0e8" stroke-width="0.6"/><path fill="none" d="M39 466Q48 465 54 461Q58 459 62 459" stroke="#e0a0c8" stroke-width="0.6"/><path fill="none" d="M39 467Q50 466 62 464" stroke="#c0a0d8" stroke-width="0.6"/><path fill="none" d="M39 468Q50 467 62 466" stroke="#a0d8d0" stroke-width="0.5"/><rect x="38" y="470" width="2" height="3.5" fill="#e080b0"/><path fill="none" d="M77 468V454M77 468H102" stroke="#ccc" stroke-width="0.4"/><circle cx="79" cy="462" r="0.7" fill="#d060a0"/><circle cx="82" cy="461" r="0.7" fill="#d060a0"/><circle cx="86.5" cy="459.5" r="0.8" fill="#d060a0"/><circle cx="91" cy="458" r="0.7" fill="#d060a0"/><circle cx="96" cy="456" r="0.8" fill="#d060a0"/><circle cx="100" cy="455.5" r="0.7" fill="#d060a0"/><circle cx="86.5" cy="457" r="0.6" fill="#a0b8e0"/><circle cx="96" cy="458.5" r="0.6" fill="#a0b8e0"/><circle cx="91" cy="461" r="0.6" fill="#a0d8d8"/><rect x="77" y="470" width="2" height="3.5" fill="#d060a0"/><path fill="none" d="M111.5 468V454M111.5 468H136" stroke="#ccc" stroke-width="0.4"/><circle cx="114" cy="465" r="0.8" fill="#80b0d8"/><circle cx="118" cy="463.5" r="0.8" fill="#c060b0"/><circle cx="125" cy="462" r="0.8" fill="#c060b0"/><circle cx="128" cy="457.5" r="0.8" fill="#c060b0"/><circle cx="124" cy="454.5" r="0.8" fill="#c060b0"/><circle cx="133" cy="461" r="0.8" fill="#9080c0"/><circle cx="116" cy="461" r="0.6" fill="#80c8d0"/><circle cx="121" cy="466" r="0.7" fill="#80b0d8"/><circle cx="133" cy="464" r="0.7" fill="#c0a0d8"/><rect x="111" y="470" width="2" height="3.5" fill="#80b0d8"/><rect x="40" y="490" width="4" height="2" fill="#7d50a5"/><rect x="44" y="484" width="4" height="8" fill="#7d50a5"/><rect x="48" y="481" width="4" height="11" fill="#7d50a5"/><rect x="52" y="480" width="4" height="12" fill="#7d50a5"/><rect x="56" y="486" width="4" height="6" fill="#7d50a5"/><rect x="60" y="489" width="4" height="3" fill="#7d50a5"/><path fill="none" d="M39 477V492H66" stroke="#ccc" stroke-width="0.4"/><path d="M80.30 476.90A7.6 7.6 0 0 0 73.85 488.53L77.76 486.09A3.0 3.0 0 0 1 80.30 481.50Z" fill="#33b11e"/><path d="M73.85 488.53A7.6 7.6 0 0 0 80.30 492.10L80.30 487.50A3.0 3.0 0 0 1 77.76 486.09Z" fill="#007a96"/><path d="M80.30 492.10A7.6 7.6 0 0 0 86.88 488.30L82.90 486.00A3.0 3.0 0 0 1 80.30 487.50Z" fill="#2aa2c8"/><path d="M86.88 488.30A7.6 7.6 0 0 0 87.90 484.50L83.30 484.50A3.0 3.0 0 0 1 82.90 486.00Z" fill="#5ec5e2"/><path d="M87.90 484.50A7.6 7.6 0 0 0 87.53 482.15L83.15 483.57A3.0 3.0 0 0 1 83.30 484.50Z" fill="#19c9a0"/><path d="M87.53 482.15A7.6 7.6 0 0 0 80.30 476.90L80.30 481.50A3.0 3.0 0 0 1 83.15 483.57Z" fill="#1de27a"/><path d="M100.4 484.5L106.98 480.70A7.6 7.6 0 0 0 94.58 479.61Z" fill="#1de27a"/><path d="M100.4 484.5L94.58 479.61A7.6 7.6 0 0 0 93.26 487.10Z" fill="#33b11e"/><path d="M100.4 484.5L93.26 487.10A7.6 7.6 0 0 0 97.80 491.64Z" fill="#007a96"/><path d="M100.4 484.5L97.80 491.64A7.6 7.6 0 0 0 106.22 489.39Z" fill="#2aa2c8"/><path d="M100.4 484.5L106.22 489.39A7.6 7.6 0 0 0 108.00 484.50Z" fill="#5ec5e2"/><path d="M100.4 484.5L108.00 484.50A7.6 7.6 0 0 0 106.98 480.70Z" fill="#19c9a0"/><rect x="72.5" y="493.5" width="8" height="4" fill="#30c0a0"/><rect x="72.5" y="495.5" width="8" height="2" fill="#2aa2c8"/><rect x="92.5" y="493.5" width="8" height="4" fill="#30c0a0"/><rect x="92.5" y="495.5" width="8" height="2" fill="#2aa2c8"/><rect x="113" y="478" width="3" height="2.5" fill="#19c9a0"/><rect x="116" y="478" width="4" height="2.5" fill="#1de27a"/><rect x="120" y="478" width="6" height="2.5" fill="#33b11e"/><rect x="126" y="478" width="3" height="2.5" fill="#007a96"/><rect x="129" y="478" width="7" height="2.5" fill="#5ec5e2"/><rect x="113" y="482" width="7" height="9.5" fill="#2aa2c8"/><rect x="113" y="482" width="7" height="3" fill="#1de27a"/><rect x="113" y="485" width="7" height="1.5" fill="#33b11e"/><path fill="none" d="M120 483H127M120 485H127M120 487H127M120 489H127" stroke="#ddd" stroke-width="0.3"/></svg>
<div class="t" style="left:-12.0px;top:505.0px;width:200px;font-size:9.2px;line-height:12px;color:#141414;text-align:center;">Design elements - BI charts</div>
<svg style="left:0;top:0" width="160" height="712"><path d="M55 540L58 539L58 546L62 548L64 552L62 556L58 560L54 561L52 557L48 558L46 555L50 552L53 548Z" fill="#8a70b0"/><path d="M46 553L52 550L54 556L50 560L46 559Z" fill="#e0a0d8"/><path d="M52 550L58 550L58 556L54 557Z" fill="#3a5a50"/><path d="M50 545L53 544L53 548L50 548Z" fill="#6a78a0"/><rect x="72" y="540" width="6" height="27" fill="#fff"/><rect x="72" y="540.00" width="6" height="1.74" fill="#7a68a8"/><rect x="72" y="541.69" width="6" height="1.74" fill="#a898c8"/><rect x="72" y="543.38" width="6" height="1.74" fill="#5a8a9a"/><rect x="72" y="545.06" width="6" height="1.74" fill="#c8a0c8"/><rect x="72" y="546.75" width="6" height="1.74" fill="#8a78b0"/><rect x="72" y="548.44" width="6" height="1.74" fill="#4a6a80"/><rect x="72" y="550.12" width="6" height="1.74" fill="#b0c0d0"/><rect x="72" y="551.81" width="6" height="1.74" fill="#9070a8"/><rect x="72" y="553.50" width="6" height="1.74" fill="#70a8a0"/><rect x="72" y="555.19" width="6" height="1.74" fill="#7a68a8"/><rect x="72" y="556.88" width="6" height="1.74" fill="#a898c8"/><rect x="72" y="558.56" width="6" height="1.74" fill="#5a8a9a"/><rect x="72" y="560.25" width="6" height="1.74" fill="#c8a0c8"/><rect x="72" y="561.94" width="6" height="1.74" fill="#8a78b0"/><rect x="72" y="563.62" width="6" height="1.74" fill="#4a6a80"/><rect x="72" y="565.31" width="6" height="1.74" fill="#b0c0d0"/><path d="M91 541L110 540L117 541L119 546L115 552L112 557L107 553L101 555L96 552L91 548Z" fill="#7aa0a8"/><path d="M91 541L98 541L98 548L91 548Z" fill="#b898c8"/><path d="M104 542L110 542L111 548L105 549Z" fill="#c0a8b8"/><path d="M110 546L117 544L116 551L110 552Z" fill="#6a5a9a"/><path d="M94 549L101 549L101 554L94 553Z" fill="#5a88a0"/><path d="M92 553L96 554L95 557L91 556Z" fill="#7a58a8"/><rect x="121.8" y="540" width="5" height="46" fill="#fff"/><rect x="121.8" y="540.00" width="5" height="1.69" fill="#7a68a8"/><rect x="121.8" y="541.64" width="5" height="1.69" fill="#a898c8"/><rect x="121.8" y="543.29" width="5" height="1.69" fill="#5a8a9a"/><rect x="121.8" y="544.93" width="5" height="1.69" fill="#c8a0c8"/><rect x="121.8" y="546.57" width="5" height="1.69" fill="#8a78b0"/><rect x="121.8" y="548.21" width="5" height="1.69" fill="#4a6a80"/><rect x="121.8" y="549.86" width="5" height="1.69" fill="#b0c0d0"/><rect x="121.8" y="551.50" width="5" height="1.69" fill="#9070a8"/><rect x="121.8" y="553.14" width="5" height="1.69" fill="#70a8a0"/><rect x="121.8" y="554.79" width="5" height="1.69" fill="#7a68a8"/><rect x="121.8" y="556.43" width="5" height="1.69" fill="#a898c8"/><rect x="121.8" y="558.07" width="5" height="1.69" fill="#5a8a9a"/><rect x="121.8" y="559.71" width="5" height="1.69" fill="#c8a0c8"/><rect x="121.8" y="561.36" width="5" height="1.69" fill="#8a78b0"/><rect x="121.8" y="563.00" width="5" height="1.69" fill="#4a6a80"/><rect x="121.8" y="564.64" width="5" height="1.69" fill="#b0c0d0"/><rect x="121.8" y="566.29" width="5" height="1.69" fill="#9070a8"/><rect x="121.8" y="567.93" width="5" height="1.69" fill="#70a8a0"/><rect x="121.8" y="569.57" width="5" height="1.69" fill="#7a68a8"/><rect x="121.8" y="571.21" width="5" height="1.69" fill="#a898c8"/><rect x="121.8" y="572.86" width="5" height="1.69" fill="#5a8a9a"/><rect x="121.8" y="574.50" width="5" height="1.69" fill="#c8a0c8"/><rect x="121.8" y="576.14" width="5" height="1.69" fill="#8a78b0"/><rect x="121.8" y="577.79" width="5" height="1.69" fill="#4a6a80"/><rect x="121.8" y="579.43" width="5" height="1.69" fill="#b0c0d0"/><rect x="121.8" y="581.07" width="5" height="1.69" fill="#9070a8"/><rect x="121.8" y="582.71" width="5" height="1.69" fill="#70a8a0"/><rect x="121.8" y="584.36" width="5" height="1.69" fill="#7a68a8"/><path d="M42 567L49 566L53 569L55 574L54 580L55 586L50 590L43 590L40 585L37 578L38 572Z" fill="#5a78a0"/><path d="M38 572L44 569L46 576L42 582L37 578Z" fill="#7050a0"/><path d="M44 569L49 567L52 572L48 576L45 575Z" fill="#8a8aa0"/><path d="M41 582L47 581L48 588L43 590L40 586Z" fill="#8a70b0"/><path d="M49 575L53 574L54 579L50 580Z" fill="#80c0c0"/><path d="M40 578L44 578L43 582L39 582Z" fill="#d090c8"/><rect x="57" y="567" width="7.5" height="17" fill="#fff"/><rect x="57" y="567.00" width="7.5" height="1.75" fill="#7a68a8"/><rect x="57" y="568.70" width="7.5" height="1.75" fill="#a898c8"/><rect x="57" y="570.40" width="7.5" height="1.75" fill="#5a8a9a"/><rect x="57" y="572.10" width="7.5" height="1.75" fill="#c8a0c8"/><rect x="57" y="573.80" width="7.5" height="1.75" fill="#8a78b0"/><rect x="57" y="575.50" width="7.5" height="1.75" fill="#4a6a80"/><rect x="57" y="577.20" width="7.5" height="1.75" fill="#b0c0d0"/><rect x="57" y="578.90" width="7.5" height="1.75" fill="#9070a8"/><rect x="57" y="580.60" width="7.5" height="1.75" fill="#70a8a0"/><rect x="57" y="582.30" width="7.5" height="1.75" fill="#7a68a8"/><path d="M82 569L86 568L92 566L97 568L99 573L97 578L93 581L92 587L96 591L90 590L86 583L84 577L82 573Z" fill="#8ac8c8"/><path d="M84 578L93 578L92 585L87 584Z" fill="#6a78a0"/><path d="M92 566L96 565L98 569L94 570Z" fill="#3a6a60"/><path d="M86 584L90 586L93 590L90 590Z" fill="#c08860"/><rect x="103" y="566" width="6" height="15" fill="#fff"/><rect x="103" y="566.00" width="6" height="1.72" fill="#7a68a8"/><rect x="103" y="567.67" width="6" height="1.72" fill="#a898c8"/><rect x="103" y="569.33" width="6" height="1.72" fill="#5a8a9a"/><rect x="103" y="571.00" width="6" height="1.72" fill="#c8a0c8"/><rect x="103" y="572.67" width="6" height="1.72" fill="#8a78b0"/><rect x="103" y="574.33" width="6" height="1.72" fill="#4a6a80"/><rect x="103" y="576.00" width="6" height="1.72" fill="#b0c0d0"/><rect x="103" y="577.67" width="6" height="1.72" fill="#9070a8"/><rect x="103" y="579.33" width="6" height="1.72" fill="#70a8a0"/><path d="M64 592L67 591L68 597L71 601L72 606L67 608L63 608L65 603L63 598Z" fill="#78b8b0"/><path d="M58 598L62 597L62 603L58 604Z" fill="#5a68a0"/><path d="M64 600L68 600L68 604L64 604Z" fill="#3a5a70"/><rect x="74.5" y="588" width="5.5" height="6" fill="#fff"/><rect x="74.5" y="588.00" width="5.5" height="2.05" fill="#7a68a8"/><rect x="74.5" y="590.00" width="5.5" height="2.05" fill="#a898c8"/><rect x="74.5" y="592.00" width="5.5" height="2.05" fill="#5a8a9a"/><path d="M100 597L106 592L112 590L118 590L122 594L124 600L120 605L114 605L110 602L104 603L100 601Z" fill="#b0c0d8"/><path d="M108 591L112 590L113 598L109 599Z" fill="#5a78a0"/><path d="M113 590L118 590L122 594L122 599L114 599Z" fill="#b080b0"/><path d="M110 599L116 600L116 604L110 603Z" fill="#7a5ab0"/><path d="M116 599L122 599L120 604L116 604Z" fill="#c8a890"/><path d="M125 600L127 598L126 604L123 607Z" fill="#40b0a0"/><rect x="130" y="590" width="5.5" height="11" fill="#fff"/><rect x="130" y="590.00" width="5.5" height="1.88" fill="#7a68a8"/><rect x="130" y="591.83" width="5.5" height="1.88" fill="#a898c8"/><rect x="130" y="593.67" width="5.5" height="1.88" fill="#5a8a9a"/><rect x="130" y="595.50" width="5.5" height="1.88" fill="#c8a0c8"/><rect x="130" y="597.33" width="5.5" height="1.88" fill="#8a78b0"/><rect x="130" y="599.17" width="5.5" height="1.88" fill="#4a6a80"/></svg>
<div class="t" style="left:-12.0px;top:614.0px;width:200px;font-size:9.2px;line-height:12px;color:#141414;text-align:center;">Design elements - BI maps</div>
<svg style="left:0;top:0" width="160" height="712"><text x="88" y="652" font-size="2.8" fill="#555" text-anchor="middle" font-family="Liberation Sans">Horizontal menu</text><rect x="47.7" y="652.8" width="81" height="6" fill="#6ab8b0"/><rect x="97" y="652.8" width="12" height="6" fill="#3a5a5a"/><text x="88" y="670" font-size="2.8" fill="#555" text-anchor="middle" font-family="Liberation Sans">Tab set</text><rect x="48" y="671" width="12" height="6" fill="#6ab8b0"/><rect x="48" y="676" width="81" height="1" fill="#8ac8c0"/><text x="68" y="687" font-size="2.8" fill="#555" text-anchor="middle" font-family="Liberation Sans">Vertical menu</text><rect x="48" y="688" width="40" height="24" fill="#555"/><rect x="48" y="700" width="40" height="6" fill="#6ab8b0"/><path fill="none" d="M48 694H88M48 706H88" stroke="#444" stroke-width="0.5"/><text x="115" y="687" font-size="2.8" fill="#555" text-anchor="middle" font-family="Liberation Sans">Radio buttons</text><circle cx="104" cy="690" r="0.8" fill="none" stroke="#aaa" stroke-width="0.3"/><circle cx="104" cy="693.5" r="0.8" fill="#333"/><circle cx="104" cy="697" r="0.8" fill="none" stroke="#aaa" stroke-width="0.3"/><circle cx="104" cy="700" r="0.8" fill="none" stroke="#aaa" stroke-width="0.3"/><circle cx="104" cy="703" r="0.8" fill="none" stroke="#aaa" stroke-width="0.3"/><path fill="none" d="M106 690H118M106 693.5H118M106 697H118M106 700H118M106 703H118" stroke="#999" stroke-width="0.7"/><path fill="none" d="M51 691H60M51 697H60M51 703H60M51 709H60" stroke="#ccc" stroke-width="0.9"/><path fill="none" d="M52 655.8H56M64 655.8H68M76 655.8H80M88 655.8H92M100 655.8H104M52 674H56M64 674H68M76 674H80" stroke="#ddd" stroke-width="0.8"/></svg>
<div class="t" style="left:176.5px;top:119.5px;font-size:12.4px;line-height:16px;color:#d24726;text-align:left;">Library</div>
<svg style="left:267.3px;top:122.5px" width="22" height="12"><path d="M1.5 0.5H4.5V6.5H1.5Z" fill="none" stroke="#333" stroke-width="1"/><path fill="none" d="M0 6.5H6M3 6.5V10" stroke="#333" stroke-width="1"/><path fill="none" d="M12.8 1.6L19.2 7.8M19.2 1.6L12.8 7.8" stroke="#333" stroke-width="1.3"/></svg>
<svg style="left:174px;top:144px" width="22" height="12"><path d="M6 2L2.5 6L6 10" fill="none" stroke="#333" stroke-width="1.3"/><path d="M14 2L17.5 6L14 10" fill="none" stroke="#1f4fa0" stroke-width="1.3"/></svg>
<div class="a" style="left:197px;top:143px;width:96px;height:16px;background:#fff;border:1px solid #ababab"></div>
<div class="t" style="left:203px;top:145.0px;font-size:9.5px;line-height:12px;color:#222;text-align:left;">BI charts</div>
<svg style="left:280px;top:149px" width="8" height="5"><path d="M0.5 0.5H6.5L3.5 3.5Z" fill="#444"/></svg>
<div class="a" style="left:173px;top:161px;width:107px;height:68px;background:#e5f3fb;border:1px solid #99d1f0"></div>
<div class="a" style="left:281px;top:161px;width:12px;height:550px;background:#f0f0f0"></div>
<div class="a" style="left:282px;top:176px;width:10px;height:370px;background:#cdcdcd"></div>
<svg style="left:282px;top:165px" width="10" height="8"><path d="M1.5 5.5L5 2L8.5 5.5" fill="none" stroke="#444" stroke-width="1.2"/></svg>
<svg style="left:282px;top:702px" width="10" height="8"><path d="M1.5 2L5 5.5L8.5 2" fill="none" stroke="#444" stroke-width="1.2"/></svg>
<svg style="left:0;top:0" width="300" height="712"><rect x="205" y="173.5" width="1.5" height="23.5" fill="#c8c8c8"/><path fill="none" d="M206 197H243" stroke="#bbb" stroke-width="0.6"/><path d="M206.5 181Q210 180 213 183Q216 186 220 187L224 188L232 186L242 190V197H206.5Z" fill="#c9a6d9" stroke="#8a50a0" stroke-width="0.5"/><path d="M220 187L232 181L242 176V190L232 186Z" fill="#94dccb" stroke="#4aaa98" stroke-width="0.5"/><path d="M227 188L234 183L242 178V190L232 186Z" fill="#6a9cc9" stroke="#3a6aa8" stroke-width="0.5"/><path d="M206.5 193L214 190L224 188L234 189L242 190V197H206.5Z" fill="#8a5aa8" opacity="0.75"/><path d="M206.5 194.5L220 193.5L242 192V197H206.5Z" fill="#c02c88"/><rect x="204" y="199" width="1.8" height="5.5" fill="#aaa"/><path fill="none" d="M206.5 199.5H209M206.5 201.5H209M206.5 203.5H209" stroke="#c8b8d8" stroke-width="0.7"/><rect x="210" y="253.0" width="39.5" height="1.6" fill="#9a8ccc"/><rect x="210" y="255.1" width="36.5" height="1.6" fill="#e6a8d6"/><rect x="210" y="257.2" width="33.5" height="1.6" fill="#bfe6e6"/><rect x="210" y="259.3" width="30.5" height="1.6" fill="#9a8ccc"/><rect x="210" y="261.4" width="27.5" height="1.6" fill="#e6a8d6"/><rect x="210" y="263.5" width="24.5" height="1.6" fill="#bfe6e6"/><rect x="210" y="265.6" width="21.5" height="1.6" fill="#9a8ccc"/><rect x="210" y="267.7" width="18.5" height="1.6" fill="#e6a8d6"/><rect x="210" y="269.8" width="15.5" height="1.6" fill="#bfe6e6"/><rect x="210" y="271.9" width="12.5" height="1.6" fill="#9a8ccc"/><rect x="210" y="274.0" width="9.5" height="1.6" fill="#e6a8d6"/><path fill="none" d="M209.5 252V276.5H250" stroke="#c8c8c8" stroke-width="0.5"/><path fill="none" d="M203 253H207M203 257H207M203 261H207M203 265H207M203 269H207M203 273H207" stroke="#d8d8d8" stroke-width="0.6"/><rect x="209" y="279" width="2" height="6" fill="#888"/><rect x="211" y="282" width="2" height="3" fill="#e080c0"/><rect x="211" y="280" width="2" height="2" fill="#9a8ccc"/><rect x="206.30" y="350.80" width="1.1" height="3.00" fill="#86d8d6"/><rect x="207.30" y="347.80" width="1.1" height="6.00" fill="#8e66bc"/><rect x="208.30" y="343.80" width="1.2" height="10.00" fill="#c466b6"/><rect x="209.90" y="350.20" width="1.1" height="3.60" fill="#86d8d6"/><rect x="210.90" y="346.80" width="1.1" height="7.00" fill="#8e66bc"/><rect x="211.90" y="342.65" width="1.2" height="11.15" fill="#c466b6"/><rect x="213.50" y="349.60" width="1.1" height="4.20" fill="#86d8d6"/><rect x="214.50" y="345.80" width="1.1" height="8.00" fill="#8e66bc"/><rect x="215.50" y="341.50" width="1.2" height="12.30" fill="#c466b6"/><rect x="217.10" y="349.00" width="1.1" height="4.80" fill="#86d8d6"/><rect x="218.10" y="344.80" width="1.1" height="9.00" fill="#8e66bc"/><rect x="219.10" y="340.35" width="1.2" height="13.45" fill="#c466b6"/><rect x="220.70" y="348.40" width="1.1" height="5.40" fill="#86d8d6"/><rect x="221.70" y="343.80" width="1.1" height="10.00" fill="#8e66bc"/><rect x="222.70" y="339.20" width="1.2" height="14.60" fill="#c466b6"/><rect x="224.30" y="347.80" width="1.1" height="6.00" fill="#86d8d6"/><rect x="225.30" y="342.80" width="1.1" height="11.00" fill="#8e66bc"/><rect x="226.30" y="338.05" width="1.2" height="15.75" fill="#c466b6"/><rect x="227.90" y="347.20" width="1.1" height="6.60" fill="#86d8d6"/><rect x="228.90" y="341.80" width="1.1" height="12.00" fill="#8e66bc"/><rect x="229.90" y="336.90" width="1.2" height="16.90" fill="#c466b6"/><rect x="231.50" y="346.60" width="1.1" height="7.20" fill="#86d8d6"/><rect x="232.50" y="340.80" width="1.1" height="13.00" fill="#8e66bc"/><rect x="233.50" y="335.75" width="1.2" height="18.05" fill="#c466b6"/><rect x="235.10" y="346.00" width="1.1" height="7.80" fill="#86d8d6"/><rect x="236.10" y="339.80" width="1.1" height="14.00" fill="#8e66bc"/><rect x="237.10" y="334.60" width="1.2" height="19.20" fill="#c466b6"/><rect x="238.70" y="345.40" width="1.1" height="8.40" fill="#86d8d6"/><rect x="239.70" y="338.80" width="1.1" height="15.00" fill="#8e66bc"/><rect x="240.70" y="333.45" width="1.2" height="20.35" fill="#c466b6"/><path fill="none" d="M205.5 331V354H246" stroke="#aaa" stroke-width="0.5"/><rect x="204" y="357" width="2" height="6" fill="#888"/><rect x="206" y="357" width="2" height="2" fill="#86d8d6"/><rect x="206" y="361" width="2" height="2" fill="#c466b6"/><rect x="201.8" y="414" width="4.2" height="5" fill="#19c9a0"/><rect x="206" y="414" width="8" height="5" fill="#1de27a"/><rect x="214" y="414" width="13" height="5" fill="#33b11e"/><rect x="227" y="414" width="3.5" height="5" fill="#007a96"/><rect x="230.5" y="414" width="6.5" height="5" fill="#2aa2c8"/><rect x="237" y="414" width="14" height="5" fill="#5ec5e2"/><rect x="201.5" y="421.5" width="38" height="22" fill="#fff" stroke="#ddd" stroke-width="0.5"/><rect x="201.5" y="424.5" width="15.5" height="3.2" fill="#19c9a0"/><rect x="201.5" y="427.7" width="15.5" height="3.2" fill="#1de27a"/><rect x="201.5" y="430.9" width="15.5" height="3.2" fill="#33b11e"/><rect x="201.5" y="434.1" width="15.5" height="3.2" fill="#007a96"/><rect x="201.5" y="437.3" width="15.5" height="3.2" fill="#2aa2c8"/><rect x="201.5" y="440.5" width="15.5" height="3" fill="#5ec5e2"/><path fill="none" d="M217 427.7H239.5M217 430.9H239.5M217 434.1H239.5M217 437.3H239.5M217 440.5H239.5" stroke="#ddd" stroke-width="0.4"/><path d="M226.60 482.40A14.1 14.1 0 0 0 214.64 503.97L221.94 499.41A5.5 5.5 0 0 1 226.60 491.00Z" fill="#33b11e"/><path d="M214.64 503.97A14.1 14.1 0 0 0 226.60 510.60L226.60 502.00A5.5 5.5 0 0 1 221.94 499.41Z" fill="#007a96"/><path d="M226.60 510.60A14.1 14.1 0 0 0 238.81 503.55L231.36 499.25A5.5 5.5 0 0 1 226.60 502.00Z" fill="#2aa2c8"/><path d="M238.81 503.55A14.1 14.1 0 0 0 240.70 496.50L232.10 496.50A5.5 5.5 0 0 1 231.36 499.25Z" fill="#5ec5e2"/><path d="M240.70 496.50A14.1 14.1 0 0 0 240.01 492.14L231.83 494.80A5.5 5.5 0 0 1 232.10 496.50Z" fill="#19c9a0"/><path d="M240.01 492.14A14.1 14.1 0 0 0 226.60 482.40L226.60 491.00A5.5 5.5 0 0 1 231.83 494.80Z" fill="#1de27a"/><rect x="212" y="512.5" width="29" height="17" fill="#fff" stroke="#ccc" stroke-width="0.4"/><rect x="212" y="514.5" width="15" height="3" fill="#19c9a0"/><rect x="212" y="517.5" width="15" height="2.5" fill="#1de27a"/><rect x="212" y="520" width="15" height="2.3" fill="#33b11e"/><rect x="212" y="522.3" width="15" height="2.4" fill="#007a96"/><rect x="212" y="524.7" width="15" height="4.8" fill="#5ec5e2"/><rect x="205" y="568" width="1.3" height="22.5" fill="#c8c8c8"/><rect x="205" y="590" width="39" height="1" fill="#d0d0d0"/><circle cx="213.5" cy="580" r="0.9" fill="#e080c0"/><circle cx="213.5" cy="582" r="0.6" fill="#b0a0d8"/><circle cx="213.5" cy="584.5" r="0.6" fill="#a8dada"/><circle cx="220.5" cy="578" r="1" fill="#e080c0"/><circle cx="220.5" cy="580.5" r="0.7" fill="#b080c0"/><circle cx="220.5" cy="576" r="0.6" fill="#a8dada"/><circle cx="228" cy="575.5" r="0.9" fill="#e080c0"/><circle cx="228" cy="578" r="0.6" fill="#b0a0d8"/><circle cx="228" cy="582" r="0.6" fill="#a8dada"/><circle cx="235" cy="573.5" r="0.9" fill="#e080c0"/><circle cx="235" cy="580" r="0.6" fill="#a8dada"/><circle cx="241.5" cy="571" r="0.9" fill="#e080c0"/><circle cx="241.5" cy="578" r="0.6" fill="#a8dada"/><circle cx="206" cy="582" r="1" fill="#d04090"/><rect x="204" y="595" width="2" height="5.5" fill="#999"/><rect x="205.3" y="650" width="0.8" height="22" fill="#bbb"/><rect x="206.7" y="671" width="5.8" height="1.5" fill="#7d50a5"/><rect x="212.8" y="662.7" width="5.6" height="9.8" fill="#7d50a5"/><rect x="218.7" y="658.3" width="5.6" height="14.2" fill="#7d50a5"/><rect x="224.6" y="656" width="5.2" height="16.5" fill="#7d50a5"/><rect x="230.1" y="664.6" width="5.8" height="7.9" fill="#7d50a5"/><rect x="236.2" y="668.7" width="4.8" height="3.8" fill="#7d50a5"/><path fill="none" d="M206 674.5H241" stroke="#aaa" stroke-width="0.6"/></svg>
<div class="t" style="left:126.0px;top:216.0px;width:200px;font-size:9.2px;line-height:12px;color:#141414;text-align:center;">Area chart - serial</div>
<div class="t" style="left:126.0px;top:295.0px;width:200px;font-size:9.2px;line-height:12px;color:#141414;text-align:center;">Horizontal bar chart</div>
<div class="t" style="left:126.0px;top:307.0px;width:200px;font-size:9.2px;line-height:12px;color:#141414;text-align:center;">(multi-series)</div>
<div class="t" style="left:126.0px;top:374.0px;width:200px;font-size:9.2px;line-height:12px;color:#141414;text-align:center;">Column chart</div>
<div class="t" style="left:126.0px;top:386.0px;width:200px;font-size:9.2px;line-height:12px;color:#141414;text-align:center;">(multi-series)</div>
<div class="t" style="left:126.0px;top:453.0px;width:200px;font-size:9.2px;line-height:12px;color:#141414;text-align:center;">Divided bar chart</div>
<div class="t" style="left:126.0px;top:532.0px;width:200px;font-size:9.2px;line-height:12px;color:#141414;text-align:center;">Donut chart</div>
<div class="t" style="left:126.0px;top:611.0px;width:200px;font-size:9.2px;line-height:12px;color:#141414;text-align:center;">Dot plot (multi-series)</div>
<div class="t" style="left:126.0px;top:690.0px;width:200px;font-size:9.2px;line-height:12px;color:#141414;text-align:center;">Histogram</div>
<div class="a" style="left:297px;top:119px;width:923px;height:527px;background:#adc0be"></div>
<div class="a" style="left:1220px;top:119px;width:13px;height:527px;background:#f0f0f0"></div>
<div class="a" style="left:302px;top:639px;width:918px;height:7px;background:linear-gradient(#6f7a79,#97a4a3)"></div>
<div class="a" style="left:1217px;top:128px;width:3px;height:512px;background:linear-gradient(90deg,#7a8484,#8f9a9a)"></div>
<div class="a" style="left:300px;top:126px;width:917px;height:514px;background:#e0e0e0;border:1px solid #333;border-top-width:2px;border-right:1px solid #222;border-bottom:1px solid #222"></div>
<div class="a" style="left:301px;top:127px;width:165px;height:41px;background:#787878"></div>
<div class="t" style="left:300.5px;top:140.5px;width:165px;font-size:17.5px;line-height:23px;color:#fff;text-align:center;">2016</div>
<div class="a" style="left:301px;top:168px;width:165px;height:40px;background:#4a8be0"></div>
<div class="t" style="left:321px;top:175.0px;font-size:20.2px;line-height:26px;color:#fff;text-align:left;">January</div>
<div class="a" style="left:301px;top:208px;width:165px;height:432px;background:#555"></div>
<div class="a" style="left:301px;top:245px;width:165px;height:1px;background:#343434"></div>
<div class="a" style="left:301px;top:246px;width:165px;height:1px;background:#939393"></div>
<div class="t" style="left:321px;top:216.3px;font-size:16.3px;line-height:21px;color:#fff;text-align:left;">February</div>
<div class="a" style="left:301px;top:285px;width:165px;height:1px;background:#343434"></div>
<div class="a" style="left:301px;top:286px;width:165px;height:1px;background:#939393"></div>
<div class="t" style="left:321px;top:255.7px;font-size:16.3px;line-height:21px;color:#fff;text-align:left;">March</div>
<div class="a" style="left:301px;top:324px;width:165px;height:1px;background:#343434"></div>
<div class="a" style="left:301px;top:325px;width:165px;height:1px;background:#939393"></div>
<div class="t" style="left:321px;top:295.1px;font-size:16.3px;line-height:21px;color:#fff;text-align:left;">April</div>
<div class="a" style="left:301px;top:364px;width:165px;height:1px;background:#343434"></div>
<div class="a" style="left:301px;top:365px;width:165px;height:1px;background:#939393"></div>
<div class="t" style="left:321px;top:334.5px;font-size:16.3px;line-height:21px;color:#fff;text-align:left;">May</div>
<div class="a" style="left:301px;top:403px;width:165px;height:1px;background:#343434"></div>
<div class="a" style="left:301px;top:404px;width:165px;height:1px;background:#939393"></div>
<div class="t" style="left:321px;top:373.9px;font-size:16.3px;line-height:21px;color:#fff;text-align:left;">June</div>
<div class="a" style="left:301px;top:442px;width:165px;height:1px;background:#343434"></div>
<div class="a" style="left:301px;top:443px;width:165px;height:1px;background:#939393"></div>
<div class="t" style="left:321px;top:413.2px;font-size:16.3px;line-height:21px;color:#fff;text-align:left;">July</div>
<div class="a" style="left:301px;top:482px;width:165px;height:1px;background:#343434"></div>
<div class="a" style="left:301px;top:483px;width:165px;height:1px;background:#939393"></div>
<div class="t" style="left:321px;top:452.6px;font-size:16.3px;line-height:21px;color:#fff;text-align:left;">August</div>
<div class="a" style="left:301px;top:521px;width:165px;height:1px;background:#343434"></div>
<div class="a" style="left:301px;top:522px;width:165px;height:1px;background:#939393"></div>
<div class="t" style="left:321px;top:492.0px;font-size:16.3px;line-height:21px;color:#fff;text-align:left;">September</div>
<div class="a" style="left:301px;top:561px;width:165px;height:1px;background:#343434"></div>
<div class="a" style="left:301px;top:562px;width:165px;height:1px;background:#939393"></div>
<div class="t" style="left:321px;top:531.4px;font-size:16.3px;line-height:21px;color:#fff;text-align:left;">October</div>
<div class="a" style="left:301px;top:600px;width:165px;height:1px;background:#343434"></div>
<div class="a" style="left:301px;top:601px;width:165px;height:1px;background:#939393"></div>
<div class="t" style="left:321px;top:570.8px;font-size:16.3px;line-height:21px;color:#fff;text-align:left;">November</div>
<div class="t" style="left:321px;top:610.2px;font-size:16.3px;line-height:21px;color:#fff;text-align:left;">December</div>
<div class="a" style="left:301px;top:208px;width:165px;height:1px;background:#6d6862"></div>
<div class="t" style="left:486px;top:141.5px;font-size:17.8px;line-height:23px;color:#707070;text-align:left;">Dashboard - Products Quantity Sold by Month</div>
<div class="a" style="left:486px;top:180px;width:381px;height:444px;background:#fff"></div>
<div class="a" style="left:890px;top:180px;width:315px;height:444px;background:#fff"></div>
<div class="t" style="left:486.0px;top:211.5px;width:380px;font-size:23.5px;line-height:31px;color:#111;text-align:center;">Products Quantity Sold, Jan</div>
<svg style="left:0;top:0" width="1500" height="732"><path d="M676.80 418.40L846.00 418.40A169.2 169.2 0 0 0 766.97 275.23Z" fill="#19c9a0" stroke="#19c9a0" stroke-width="0.6"/><path d="M676.80 418.40L766.97 275.23A169.2 169.2 0 0 0 683.91 249.35Z" fill="#1de27a" stroke="#1de27a" stroke-width="0.6"/><path d="M676.80 418.40L683.91 249.35A169.2 169.2 0 0 0 627.01 256.69Z" fill="#33b11e" stroke="#33b11e" stroke-width="0.6"/><path d="M676.80 418.40L627.01 256.69A169.2 169.2 0 0 0 555.33 300.62Z" fill="#007a96" stroke="#007a96" stroke-width="0.6"/><path d="M676.80 418.40L555.33 300.62A169.2 169.2 0 0 0 517.14 362.40Z" fill="#2aa2c8" stroke="#2aa2c8" stroke-width="0.6"/><path d="M676.80 418.40L517.14 362.40A169.2 169.2 0 0 0 509.37 442.78Z" fill="#5ec5e2" stroke="#5ec5e2" stroke-width="0.6"/><path d="M676.80 418.40L509.37 442.78A169.2 169.2 0 0 0 571.03 550.47Z" fill="#6c8bc6" stroke="#6c8bc6" stroke-width="0.6"/><path d="M676.80 418.40L571.03 550.47A169.2 169.2 0 0 0 630.65 581.18Z" fill="#7f55a0" stroke="#7f55a0" stroke-width="0.6"/><path d="M676.80 418.40L630.65 581.18A169.2 169.2 0 0 0 677.08 587.60Z" fill="#5e2a85" stroke="#5e2a85" stroke-width="0.6"/><path d="M676.80 418.40L677.08 587.60A169.2 169.2 0 0 0 829.28 491.74Z" fill="#b800cc" stroke="#b800cc" stroke-width="0.6"/><path d="M676.80 418.40L829.28 491.74A169.2 169.2 0 0 0 846.00 418.40Z" fill="#999999" stroke="#999999" stroke-width="0.6"/><rect x="506.6" y="248.8" width="339.9" height="339.7" fill="none" stroke="#5fd35f" stroke-width="1.1" stroke-dasharray="4 3.6"/></svg>
<svg style="left:0;top:0" width="1500" height="732"><circle cx="501" cy="245" r="5" fill="#33c233"/><path d="M498.98 247.98L506.60 248.80L503.02 242.02Z" fill="#33c233"/><circle cx="676.3" cy="241.8" r="5" fill="#33c233"/><path d="M672.70 241.80L676.30 248.80L679.90 241.80Z" fill="#33c233"/><circle cx="850" cy="244.8" r="5" fill="#33c233"/><path d="M847.29 242.43L846.50 248.80L852.71 247.17Z" fill="#33c233"/><circle cx="500.7" cy="418.3" r="5" fill="#33c233"/><path d="M500.70 421.90L506.60 418.30L500.70 414.70Z" fill="#33c233"/><circle cx="851.5" cy="418.3" r="5" fill="#33c233"/><path d="M851.50 414.70L846.50 418.30L851.50 421.90Z" fill="#33c233"/><circle cx="501" cy="592" r="5" fill="#33c233"/><path d="M502.91 595.05L506.60 588.50L499.09 588.95Z" fill="#33c233"/><circle cx="676.3" cy="594" r="5" fill="#33c233"/><path d="M679.90 594.00L676.30 588.50L672.70 594.00Z" fill="#33c233"/><circle cx="850" cy="592" r="5" fill="#33c233"/><path d="M852.55 589.45L846.50 588.50L847.45 594.55Z" fill="#33c233"/><path d="M672.5 210 A4 4 0 1 1 679 212.5" fill="none" stroke="#33c233" stroke-width="1.3"/><circle cx="676" cy="227" r="4" fill="#f0b400"/></svg>
<div class="a" style="left:909px;top:217px;width:277px;height:388px;background:#fff;border:1px solid #dcdcdc"></div>
<div class="a" style="left:1056px;top:217px;width:1px;height:388px;background:#dcdcdc"></div>
<div class="t" style="left:1056px;top:222.5px;width:129px;font-size:16.2px;line-height:21px;color:#6e6e6e;text-align:center;">Quantity Sold</div>
<div class="a" style="left:909px;top:249px;width:147px;height:33px;background:#19c9a0"></div>
<div class="a" style="left:1056px;top:249px;width:130px;height:1px;background:#dcdcdc"></div>
<div class="t" style="left:919px;top:255.9px;font-size:14.5px;line-height:19px;color:#fff;text-align:left;">Product A</div>
<div class="t" style="left:1056px;top:256.9px;width:129px;font-size:13.2px;line-height:17px;color:#626262;text-align:center;">450</div>
<div class="a" style="left:909px;top:282px;width:147px;height:32px;background:#1de27a"></div>
<div class="a" style="left:1056px;top:282px;width:130px;height:1px;background:#dcdcdc"></div>
<div class="t" style="left:919px;top:288.2px;font-size:14.5px;line-height:19px;color:#fff;text-align:left;">Product B</div>
<div class="t" style="left:1056px;top:289.2px;width:129px;font-size:13.2px;line-height:17px;color:#626262;text-align:center;">232</div>
<div class="a" style="left:909px;top:314px;width:147px;height:32px;background:#33b11e"></div>
<div class="a" style="left:1056px;top:314px;width:130px;height:1px;background:#dcdcdc"></div>
<div class="t" style="left:919px;top:320.5px;font-size:14.5px;line-height:19px;color:#fff;text-align:left;">Product C</div>
<div class="t" style="left:1056px;top:321.5px;width:129px;font-size:13.2px;line-height:17px;color:#626262;text-align:center;">152</div>
<div class="a" style="left:909px;top:346px;width:147px;height:32px;background:#007a96"></div>
<div class="a" style="left:1056px;top:346px;width:130px;height:1px;background:#dcdcdc"></div>
<div class="t" style="left:919px;top:352.8px;font-size:14.5px;line-height:19px;color:#fff;text-align:left;">Product D</div>
<div class="t" style="left:1056px;top:353.8px;width:129px;font-size:13.2px;line-height:17px;color:#626262;text-align:center;">224</div>
<div class="a" style="left:909px;top:378px;width:147px;height:33px;background:#2aa2c8"></div>
<div class="a" style="left:1056px;top:378px;width:130px;height:1px;background:#dcdcdc"></div>
<div class="t" style="left:919px;top:385.1px;font-size:14.5px;line-height:19px;color:#fff;text-align:left;">Product E</div>
<div class="t" style="left:1056px;top:386.1px;width:129px;font-size:13.2px;line-height:17px;color:#626262;text-align:center;">193</div>
<div class="a" style="left:909px;top:411px;width:147px;height:32px;background:#5ec5e2"></div>
<div class="a" style="left:1056px;top:411px;width:130px;height:1px;background:#dcdcdc"></div>
<div class="t" style="left:919px;top:417.4px;font-size:14.5px;line-height:19px;color:#fff;text-align:left;">Product F</div>
<div class="t" style="left:1056px;top:418.4px;width:129px;font-size:13.2px;line-height:17px;color:#626262;text-align:center;">215</div>
<div class="a" style="left:909px;top:443px;width:147px;height:32px;background:#6c8bc6"></div>
<div class="a" style="left:1056px;top:443px;width:130px;height:1px;background:#dcdcdc"></div>
<div class="t" style="left:919px;top:449.6px;font-size:14.5px;line-height:19px;color:#fff;text-align:left;">Product G</div>
<div class="t" style="left:1056px;top:450.6px;width:129px;font-size:13.2px;line-height:17px;color:#626262;text-align:center;">335</div>
<div class="a" style="left:909px;top:475px;width:147px;height:33px;background:#7f55a0"></div>
<div class="a" style="left:1056px;top:475px;width:130px;height:1px;background:#dcdcdc"></div>
<div class="t" style="left:919px;top:481.9px;font-size:14.5px;line-height:19px;color:#fff;text-align:left;">Product H</div>
<div class="t" style="left:1056px;top:482.9px;width:129px;font-size:13.2px;line-height:17px;color:#626262;text-align:center;">178</div>
<div class="a" style="left:909px;top:508px;width:147px;height:32px;background:#5e2a85"></div>
<div class="a" style="left:1056px;top:508px;width:130px;height:1px;background:#dcdcdc"></div>
<div class="t" style="left:919px;top:514.2px;font-size:14.5px;line-height:19px;color:#fff;text-align:left;">Product I</div>
<div class="t" style="left:1056px;top:515.2px;width:129px;font-size:13.2px;line-height:17px;color:#626262;text-align:center;">124</div>
<div class="a" style="left:909px;top:540px;width:147px;height:32px;background:#b800cc"></div>
<div class="a" style="left:1056px;top:540px;width:130px;height:1px;background:#dcdcdc"></div>
<div class="t" style="left:919px;top:546.5px;font-size:14.5px;line-height:19px;color:#fff;text-align:left;">Product J</div>
<div class="t" style="left:1056px;top:547.5px;width:129px;font-size:13.2px;line-height:17px;color:#626262;text-align:center;">500</div>
<div class="a" style="left:909px;top:572px;width:147px;height:32px;background:#999999"></div>
<div class="a" style="left:1056px;top:572px;width:130px;height:1px;background:#dcdcdc"></div>
<div class="t" style="left:919px;top:578.8px;font-size:14.5px;line-height:19px;color:#fff;text-align:left;">Other Products</div>
<div class="t" style="left:1056px;top:579.8px;width:129px;font-size:13.2px;line-height:17px;color:#626262;text-align:center;">200</div>
<div class="a" style="left:858px;top:207px;width:136px;height:109px;background:#fff;border:1px solid #c8c8c8;box-shadow:2px 2px 2px rgba(0,0,0,0.35)"></div>
<div class="t" style="left:886px;top:210.0px;font-size:9.1px;line-height:12px;color:#222;text-align:left;">Select data source</div>
<div class="t" style="left:886px;top:227.6px;font-size:9.1px;line-height:12px;color:#222;text-align:left;">Edit data source file</div>
<div class="t" style="left:886px;top:245.0px;font-size:9.1px;line-height:12px;color:#222;text-align:left;">Refresh chart</div>
<div class="t" style="left:886px;top:265.0px;font-size:9.1px;line-height:12px;color:#a8a8a8;text-align:left;">Show percentage</div>
<div class="t" style="left:886px;top:282.0px;font-size:9.1px;line-height:12px;color:#222;text-align:left;">Chart values</div>
<div class="t" style="left:886px;top:299.6px;font-size:9.1px;line-height:12px;color:#222;text-align:left;">Legend values</div>
<div class="a" style="left:886px;top:261px;width:107px;height:1px;background:#e0e0e0"></div>
<div class="a" style="left:861px;top:298px;width:16px;height:15px;background:#f9c9b0"></div>
<svg style="left:864px;top:301px" width="10" height="9"><path d="M1 4.5L3.8 7.5L9 1" fill="none" stroke="#333" stroke-width="1.8"/></svg>
<div class="a" style="left:1220px;top:119px;width:13px;height:527px;background:#f0f0f0"></div>
<div class="a" style="left:1220px;top:145px;width:13px;height:462px;background:#fff;border:1px solid #d6d6d6;border-left-color:#eee;border-radius:2px"></div>
<div class="a" style="left:1220px;top:120px;width:13px;height:13px;background:#fff;border:1px solid #cfcfcf;border-radius:2px"></div>
<div class="a" style="left:1220px;top:634px;width:13px;height:12px;background:#fff;border:1px solid #cfcfcf;border-radius:2px"></div>
<svg style="left:1221px;top:122px" width="10" height="10"><path d="M1.5 7L5.5 3L9.5 7Z" fill="#555"/></svg>
<svg style="left:1221px;top:635px" width="10" height="10"><path d="M1.5 3L5.5 7L9.5 3Z" fill="#555"/></svg>
<div class="a" style="left:3px;top:712.7px;width:1494px;height:15.9px;background:#d24726"></div>
<div class="a" style="left:0px;top:728.6px;width:1500px;height:3.4px;background:linear-gradient(#b2cca6,#b3c1a2 50%,#8a9a7e)"></div>
<div class="a" style="left:297px;top:646px;width:938px;height:17px;background:#f0f0f0"></div>
<div class="a" style="left:297px;top:662px;width:938px;height:1px;background:#dcdcdc"></div>
<div class="a" style="left:312px;top:648px;width:13px;height:13px;background:#fafafa;border:1px solid #e0e0e0"></div>
<svg style="left:315px;top:650px" width="8" height="9"><path d="M5.5 1.5L2.5 4.5L5.5 7.5" fill="none" stroke="#aaa" stroke-width="1"/></svg>
<div class="a" style="left:325px;top:648px;width:130px;height:13px;background:#fff;border:1px solid #cfcfcf"></div>
<div class="t" style="left:323.0px;top:649.0px;width:120px;font-size:8.4px;line-height:11px;color:#333;text-align:center;">Jan (1/13)</div>
<div class="a" style="left:446px;top:654px;width:2px;height:2px;background:#333"></div>
<div class="a" style="left:454px;top:648px;width:14px;height:13px;background:#fff;border:1px solid #cfcfcf"></div>
<svg style="left:457px;top:650px" width="8" height="9"><path d="M2.5 1.5L5.5 4.5L2.5 7.5" fill="none" stroke="#555" stroke-width="1"/></svg>
<div class="a" style="left:468px;top:648px;width:14px;height:13px;background:#fff;border:1px solid #cfcfcf"></div>
<svg style="left:471px;top:650px" width="8" height="9"><path d="M6 1V8L2 4.5Z" fill="#555"/></svg>
<div class="a" style="left:507px;top:648px;width:711px;height:13px;background:#fff;border:1px solid #cfcfcf"></div>
<div class="a" style="left:1205px;top:648px;width:13px;height:13px;background:#fff;border:1px solid #cfcfcf"></div>
<svg style="left:1208px;top:650px" width="8" height="9"><path d="M2 1V8L6 4.5Z" fill="#555"/></svg>
<svg style="left:1219px;top:647px" width="14" height="14"><rect x="2.5" y="2.5" width="9" height="9" fill="#dde8f4" stroke="#2a6ac0" stroke-dasharray="2 1.5"/><rect x="5.5" y="4.5" width="3" height="5" fill="#fff" stroke="#888" stroke-width="0.6"/></svg>
<div class="a" style="left:297px;top:663px;width:938px;height:49px;background:#fff"></div>
<div class="t" style="left:301px;top:669.5px;font-size:11.4px;line-height:15px;color:#d24726;text-align:left;">Colors</div>
<svg style="left:1206.3px;top:672.5px" width="22" height="12"><path d="M1.5 0.5H4.5V6.5H1.5Z" fill="none" stroke="#333" stroke-width="1"/><path fill="none" d="M0 6.5H6M3 6.5V10" stroke="#333" stroke-width="1"/><path fill="none" d="M12.8 1.6L19.2 7.8M19.2 1.6L12.8 7.8" stroke="#333" stroke-width="1.3"/></svg>
<svg style="left:0;top:0" width="1500" height="732"><rect x="324.50" y="692.5" width="12" height="12" fill="#ff9a9a" stroke="rgba(0,0,0,0.12)" stroke-width="1"/><rect x="337.94" y="692.5" width="12" height="12" fill="#ffc29a" stroke="rgba(0,0,0,0.12)" stroke-width="1"/><rect x="351.38" y="692.5" width="12" height="12" fill="#ffd699" stroke="rgba(0,0,0,0.12)" stroke-width="1"/><rect x="364.82" y="692.5" width="12" height="12" fill="#fff09a" stroke="rgba(0,0,0,0.12)" stroke-width="1"/><rect x="378.26" y="692.5" width="12" height="12" fill="#f0ff9a" stroke="rgba(0,0,0,0.12)" stroke-width="1"/><rect x="391.70" y="692.5" width="12" height="12" fill="#c2ff66" stroke="rgba(0,0,0,0.12)" stroke-width="1"/><rect x="405.14" y="692.5" width="12" height="12" fill="#9aee77" stroke="rgba(0,0,0,0.12)" stroke-width="1"/><rect x="418.58" y="692.5" width="12" height="12" fill="#88dd99" stroke="rgba(0,0,0,0.12)" stroke-width="1"/><rect x="432.02" y="692.5" width="12" height="12" fill="#9affe0" stroke="rgba(0,0,0,0.12)" stroke-width="1"/><rect x="445.46" y="692.5" width="12" height="12" fill="#ccffff" stroke="rgba(0,0,0,0.12)" stroke-width="1"/><rect x="458.90" y="692.5" width="12" height="12" fill="#ff0000" stroke="rgba(0,0,0,0.12)" stroke-width="1"/><rect x="472.34" y="692.5" width="12" height="12" fill="#ff6600" stroke="rgba(0,0,0,0.12)" stroke-width="1"/><rect x="485.78" y="692.5" width="12" height="12" fill="#ffaa00" stroke="rgba(0,0,0,0.12)" stroke-width="1"/><rect x="499.22" y="692.5" width="12" height="12" fill="#ffdd00" stroke="rgba(0,0,0,0.12)" stroke-width="1"/><rect x="512.66" y="692.5" width="12" height="12" fill="#ddee00" stroke="rgba(0,0,0,0.12)" stroke-width="1"/><rect x="526.10" y="692.5" width="12" height="12" fill="#44cc22" stroke="rgba(0,0,0,0.12)" stroke-width="1"/><rect x="539.54" y="692.5" width="12" height="12" fill="#1a9933" stroke="rgba(0,0,0,0.12)" stroke-width="1"/><rect x="552.98" y="692.5" width="12" height="12" fill="#22bb66" stroke="rgba(0,0,0,0.12)" stroke-width="1"/><rect x="566.42" y="692.5" width="12" height="12" fill="#22ccaa" stroke="rgba(0,0,0,0.12)" stroke-width="1"/><rect x="579.86" y="692.5" width="12" height="12" fill="#77dddd" stroke="rgba(0,0,0,0.12)" stroke-width="1"/><rect x="593.30" y="692.5" width="12" height="12" fill="#991111" stroke="rgba(0,0,0,0.12)" stroke-width="1"/><rect x="606.74" y="692.5" width="12" height="12" fill="#994411" stroke="rgba(0,0,0,0.12)" stroke-width="1"/><rect x="620.18" y="692.5" width="12" height="12" fill="#996611" stroke="rgba(0,0,0,0.12)" stroke-width="1"/><rect x="633.62" y="692.5" width="12" height="12" fill="#aa9900" stroke="rgba(0,0,0,0.12)" stroke-width="1"/><rect x="647.06" y="692.5" width="12" height="12" fill="#778800" stroke="rgba(0,0,0,0.12)" stroke-width="1"/><rect x="660.50" y="692.5" width="12" height="12" fill="#116611" stroke="rgba(0,0,0,0.12)" stroke-width="1"/><rect x="673.94" y="692.5" width="12" height="12" fill="#004411" stroke="rgba(0,0,0,0.12)" stroke-width="1"/><rect x="687.38" y="692.5" width="12" height="12" fill="#118844" stroke="rgba(0,0,0,0.12)" stroke-width="1"/><rect x="700.82" y="692.5" width="12" height="12" fill="#117766" stroke="rgba(0,0,0,0.12)" stroke-width="1"/><rect x="714.26" y="692.5" width="12" height="12" fill="#119999" stroke="rgba(0,0,0,0.12)" stroke-width="1"/><rect x="727.70" y="692.5" width="12" height="12" fill="#99ddee" stroke="rgba(0,0,0,0.12)" stroke-width="1"/><rect x="741.14" y="692.5" width="12" height="12" fill="#cce8ff" stroke="rgba(0,0,0,0.12)" stroke-width="1"/><rect x="754.58" y="692.5" width="12" height="12" fill="#88ccff" stroke="rgba(0,0,0,0.12)" stroke-width="1"/><rect x="768.02" y="692.5" width="12" height="12" fill="#99aaee" stroke="rgba(0,0,0,0.12)" stroke-width="1"/><rect x="781.46" y="692.5" width="12" height="12" fill="#7788ee" stroke="rgba(0,0,0,0.12)" stroke-width="1"/><rect x="794.90" y="692.5" width="12" height="12" fill="#aaaaff" stroke="rgba(0,0,0,0.12)" stroke-width="1"/><rect x="808.34" y="692.5" width="12" height="12" fill="#ddaaee" stroke="rgba(0,0,0,0.12)" stroke-width="1"/><rect x="821.78" y="692.5" width="12" height="12" fill="#ff99ff" stroke="rgba(0,0,0,0.12)" stroke-width="1"/><rect x="835.22" y="692.5" width="12" height="12" fill="#ff99cc" stroke="rgba(0,0,0,0.12)" stroke-width="1"/><rect x="848.66" y="692.5" width="12" height="12" fill="#ffd9cc" stroke="rgba(0,0,0,0.12)" stroke-width="1"/><rect x="862.10" y="692.5" width="12" height="12" fill="#55aacc" stroke="rgba(0,0,0,0.12)" stroke-width="1"/><rect x="875.54" y="692.5" width="12" height="12" fill="#99d8ff" stroke="rgba(0,0,0,0.12)" stroke-width="1"/><rect x="888.98" y="692.5" width="12" height="12" fill="#0077cc" stroke="rgba(0,0,0,0.12)" stroke-width="1"/><rect x="902.42" y="692.5" width="12" height="12" fill="#1155dd" stroke="rgba(0,0,0,0.12)" stroke-width="1"/><rect x="915.86" y="692.5" width="12" height="12" fill="#3333aa" stroke="rgba(0,0,0,0.12)" stroke-width="1"/><rect x="929.30" y="692.5" width="12" height="12" fill="#8866ee" stroke="rgba(0,0,0,0.12)" stroke-width="1"/><rect x="942.74" y="692.5" width="12" height="12" fill="#9944cc" stroke="rgba(0,0,0,0.12)" stroke-width="1"/><rect x="956.18" y="692.5" width="12" height="12" fill="#cc55cc" stroke="rgba(0,0,0,0.12)" stroke-width="1"/><rect x="969.62" y="692.5" width="12" height="12" fill="#dd2288" stroke="rgba(0,0,0,0.12)" stroke-width="1"/><rect x="983.06" y="692.5" width="12" height="12" fill="#cc7755" stroke="rgba(0,0,0,0.12)" stroke-width="1"/><rect x="996.50" y="692.5" width="12" height="12" fill="#006688" stroke="rgba(0,0,0,0.12)" stroke-width="1"/><rect x="1009.94" y="692.5" width="12" height="12" fill="#1199ee" stroke="rgba(0,0,0,0.12)" stroke-width="1"/><rect x="1023.38" y="692.5" width="12" height="12" fill="#114499" stroke="rgba(0,0,0,0.12)" stroke-width="1"/><rect x="1036.82" y="692.5" width="12" height="12" fill="#002277" stroke="rgba(0,0,0,0.12)" stroke-width="1"/><rect x="1050.26" y="692.5" width="12" height="12" fill="#220088" stroke="rgba(0,0,0,0.12)" stroke-width="1"/><rect x="1063.70" y="692.5" width="12" height="12" fill="#5522aa" stroke="rgba(0,0,0,0.12)" stroke-width="1"/><rect x="1077.14" y="692.5" width="12" height="12" fill="#441177" stroke="rgba(0,0,0,0.12)" stroke-width="1"/><rect x="1090.58" y="692.5" width="12" height="12" fill="#551166" stroke="rgba(0,0,0,0.12)" stroke-width="1"/><rect x="1104.02" y="692.5" width="12" height="12" fill="#990066" stroke="rgba(0,0,0,0.12)" stroke-width="1"/><rect x="1117.46" y="692.5" width="12" height="12" fill="#553311" stroke="rgba(0,0,0,0.12)" stroke-width="1"/><rect x="1130.90" y="692.5" width="12" height="12" fill="#ffffff" stroke="rgba(0,0,0,0.12)" stroke-width="1"/><rect x="1144.34" y="692.5" width="12" height="12" fill="#eeeeee" stroke="rgba(0,0,0,0.12)" stroke-width="1"/><rect x="1157.78" y="692.5" width="12" height="12" fill="#dddddd" stroke="rgba(0,0,0,0.12)" stroke-width="1"/><rect x="1171.22" y="692.5" width="12" height="12" fill="#cccccc" stroke="rgba(0,0,0,0.12)" stroke-width="1"/><rect x="1184.66" y="692.5" width="12" height="12" fill="#aaaaaa" stroke="rgba(0,0,0,0.12)" stroke-width="1"/><rect x="1198.10" y="692.5" width="12" height="12" fill="#999999" stroke="rgba(0,0,0,0.12)" stroke-width="1"/><rect x="1211.54" y="692.5" width="12" height="12" fill="#777777" stroke="rgba(0,0,0,0.12)" stroke-width="1"/><rect x="297.5" y="692.5" width="25" height="12" fill="#f4f4f4" stroke="#bbb"/><path d="M303 701Q303 695 309 695L311 697Q306 698 306 701Z" fill="#2a6ac0"/><circle cx="315" cy="695.5" r="1" fill="#e02020"/><circle cx="315" cy="698.5" r="1" fill="#20a020"/><circle cx="315" cy="701.5" r="1" fill="#2060e0"/><rect x="297" y="706" width="12" height="6" fill="#555"/><rect x="310" y="706" width="12" height="6" fill="#333"/><rect x="323" y="706" width="13" height="6" fill="#000"/></svg>
<div class="t" style="left:1240px;top:120.0px;font-size:12.2px;line-height:16px;color:#d24726;text-align:left;">Arrange &amp; Size</div>
<svg style="left:1470.4px;top:122.3px" width="22" height="12"><path d="M1.5 0.5H4.5V6.5H1.5Z" fill="none" stroke="#333" stroke-width="1"/><path fill="none" d="M0 6.5H6M3 6.5V10" stroke="#333" stroke-width="1"/><path fill="none" d="M12.8 1.6L19.2 7.8M19.2 1.6L12.8 7.8" stroke="#333" stroke-width="1.3"/></svg>
<div class="a" style="left:1236px;top:142px;width:261px;height:16px;background:#f0f0f0"></div>
<div class="t" style="left:1241px;top:144.0px;font-size:9.3px;line-height:12px;color:#8a8a8a;text-align:left;">Format</div>
<div class="a" style="left:1275px;top:144px;width:1px;height:12px;background:#dcdcdc"></div>
<div class="t" style="left:1280px;top:144.0px;font-size:9.3px;line-height:12px;color:#8a8a8a;text-align:left;">Hypernote</div>
<div class="a" style="left:1329px;top:144px;width:1px;height:12px;background:#dcdcdc"></div>
<div class="t" style="left:1334px;top:144.0px;font-size:9.3px;line-height:12px;color:#8a8a8a;text-align:left;">Presentation</div>
<div class="a" style="left:1390px;top:142px;width:72px;height:16px;background:#fff;border-top:2px solid #d24726"></div>
<div class="t" style="left:1396px;top:144.0px;font-size:9.3px;line-height:12px;color:#d24726;text-align:left;">Arrange &amp; Size</div>
<div class="a" style="left:1484px;top:158px;width:13px;height:554px;background:#f0f0f0"></div>
<div class="a" style="left:1485px;top:173px;width:11px;height:506px;background:#cdcdcd"></div>
<svg style="left:1485px;top:162px" width="10" height="8"><path d="M1.5 5.5L5 2L8.5 5.5" fill="none" stroke="#444" stroke-width="1.2"/></svg>
<svg style="left:1485px;top:702px" width="10" height="8"><path d="M1.5 2L5 5.5L8.5 2" fill="none" stroke="#444" stroke-width="1.2"/></svg>
<svg style="left:1246px;top:165px" width="10" height="6"><path d="M0.5 0.5H8.5L4.5 5Z" fill="#111"/></svg>
<div class="t" style="left:1257px;top:162.0px;font-size:9.1px;line-height:12px;color:#111;text-align:left;font-weight:bold">Order</div>
<div class="a" style="left:1287px;top:173px;width:196px;height:1px;background:#a0a0a0"></div>
<svg style="left:1246px;top:234px" width="10" height="6"><path d="M0.5 0.5H8.5L4.5 5Z" fill="#111"/></svg>
<div class="t" style="left:1257px;top:231.0px;font-size:9.1px;line-height:12px;color:#111;text-align:left;font-weight:bold">Align and Distribute</div>
<div class="a" style="left:1348px;top:242px;width:135px;height:1px;background:#a0a0a0"></div>
<svg style="left:1246px;top:324px" width="10" height="6"><path d="M0.5 0.5H8.5L4.5 5Z" fill="#111"/></svg>
<div class="t" style="left:1257px;top:321.0px;font-size:9.1px;line-height:12px;color:#111;text-align:left;font-weight:bold">Size</div>
<div class="a" style="left:1279px;top:332px;width:204px;height:1px;background:#a0a0a0"></div>
<svg style="left:1246px;top:403px" width="10" height="6"><path d="M0.5 0.5H8.5L4.5 5Z" fill="#111"/></svg>
<div class="t" style="left:1257px;top:400.0px;font-size:9.1px;line-height:12px;color:#111;text-align:left;font-weight:bold">Position</div>
<div class="a" style="left:1296px;top:411px;width:187px;height:1px;background:#a0a0a0"></div>
<svg style="left:1246px;top:481px" width="10" height="6"><path d="M0.5 0.5H8.5L4.5 5Z" fill="#111"/></svg>
<div class="t" style="left:1257px;top:478.0px;font-size:9.1px;line-height:12px;color:#111;text-align:left;font-weight:bold">Rotate and Flip</div>
<div class="a" style="left:1327px;top:489px;width:156px;height:1px;background:#a0a0a0"></div>
<svg style="left:1246px;top:596px" width="10" height="6"><path d="M0.5 0.5H8.5L4.5 5Z" fill="#111"/></svg>
<div class="t" style="left:1257px;top:593.0px;font-size:9.1px;line-height:12px;color:#111;text-align:left;font-weight:bold">Group and Lock</div>
<div class="a" style="left:1330px;top:604px;width:153px;height:1px;background:#a0a0a0"></div>
<svg style="left:1246px;top:673px" width="10" height="6"><path d="M0.5 0.5H8.5L4.5 5Z" fill="#111"/></svg>
<div class="t" style="left:1257px;top:670.0px;font-size:9.1px;line-height:12px;color:#111;text-align:left;font-weight:bold">Make Same</div>
<div class="a" style="left:1313px;top:681px;width:170px;height:1px;background:#a0a0a0"></div>
<svg style="left:0;top:0" width="1500" height="732"><rect x="1262.5" y="189.5" width="7" height="7" fill="#fff" stroke="#1aa04a"/><rect x="1266.5" y="193.5" width="7" height="7" fill="none" stroke="#2a8ac0"/><rect x="1264.5" y="191.5" width="5" height="5" fill="#4c4"/><rect x="1300.5" y="189.5" width="7" height="7" fill="#fff" stroke="#1aa04a"/><rect x="1304.5" y="193.5" width="7" height="7" fill="none" stroke="#2a8ac0"/><rect x="1302.5" y="191.5" width="5" height="5" fill="#4c4"/><rect x="1339.5" y="189.5" width="7" height="7" fill="#4c4" stroke="#1aa04a"/><rect x="1343.5" y="193.5" width="7" height="7" fill="none" stroke="#2a8ac0"/><rect x="1341.5" y="191.5" width="5" height="5" fill="#4c4"/><rect x="1377.5" y="189.5" width="7" height="7" fill="#4c4" stroke="#1aa04a"/><rect x="1381.5" y="193.5" width="7" height="7" fill="none" stroke="#2a8ac0"/><rect x="1379.5" y="191.5" width="5" height="5" fill="#4c4"/></svg>
<div class="t" style="left:1168.0px;top:206.5px;width:200px;font-size:8.6px;line-height:11px;color:#333;text-align:center;">Back</div>
<div class="t" style="left:1205.0px;top:206.5px;width:200px;font-size:8.6px;line-height:11px;color:#333;text-align:center;">Front</div>
<div class="t" style="left:1242.0px;top:206.5px;width:200px;font-size:8.6px;line-height:11px;color:#333;text-align:center;">Backward</div>
<div class="t" style="left:1281.0px;top:206.5px;width:200px;font-size:8.6px;line-height:11px;color:#333;text-align:center;">Forward</div>
<svg style="left:0;top:0" width="1500" height="732"><path fill="none" d="M1263.5 257V270" stroke="#aaaaaa"/><rect x="1264.5" y="258.5" width="6" height="4" fill="none" stroke="#aaaaaa"/><rect x="1264.5" y="264.5" width="5" height="4" fill="none" stroke="#aaaaaa"/><path fill="none" d="M1305.5 257V270" stroke="#aaaaaa"/><rect x="1302.5" y="258.5" width="6" height="4" fill="none" stroke="#aaaaaa"/><rect x="1302.5" y="264.5" width="6" height="4" fill="none" stroke="#aaaaaa"/><path fill="none" d="M1347.5 257V270" stroke="#aaaaaa"/><rect x="1340.5" y="258.5" width="6" height="4" fill="none" stroke="#aaaaaa"/><rect x="1341.5" y="264.5" width="5" height="4" fill="none" stroke="#aaaaaa"/><path fill="none" d="M1376 258.5H1387" stroke="#aaaaaa"/><rect x="1376.5" y="259.5" width="4" height="6" fill="none" stroke="#aaaaaa"/><rect x="1382.5" y="259.5" width="4" height="5" fill="none" stroke="#aaaaaa"/><path fill="none" d="M1414 263.5H1426" stroke="#aaaaaa"/><rect x="1414.5" y="260.5" width="5" height="6" fill="none" stroke="#aaaaaa"/><rect x="1420.5" y="261.5" width="5" height="4" fill="none" stroke="#aaaaaa"/><path fill="none" d="M1452 268.5H1465" stroke="#aaaaaa"/><rect x="1453.5" y="261.5" width="4" height="6" fill="none" stroke="#aaaaaa"/><rect x="1459.5" y="263.5" width="4" height="4" fill="none" stroke="#aaaaaa"/></svg>
<div class="t" style="left:1167.0px;top:274.5px;width:200px;font-size:8.6px;line-height:11px;color:#333;text-align:center;">Left</div>
<div class="t" style="left:1202.0px;top:274.5px;width:200px;font-size:8.6px;line-height:11px;color:#333;text-align:center;">Center</div>
<div class="t" style="left:1243.0px;top:274.5px;width:200px;font-size:8.6px;line-height:11px;color:#333;text-align:center;">Right</div>
<div class="t" style="left:1283.0px;top:274.5px;width:200px;font-size:8.6px;line-height:11px;color:#333;text-align:center;">Top</div>
<div class="t" style="left:1320.0px;top:274.5px;width:200px;font-size:8.6px;line-height:11px;color:#333;text-align:center;">Middle</div>
<div class="t" style="left:1360.0px;top:274.5px;width:200px;font-size:8.6px;line-height:11px;color:#333;text-align:center;">Bottom</div>
<div class="a" style="left:1259px;top:290px;width:95px;height:16px;border:1px solid #dcdcdc;background:#fff"></div>
<div class="a" style="left:1373px;top:290px;width:96px;height:16px;border:1px solid #dcdcdc;background:#fff"></div>
<div class="t" style="left:1278px;top:292.5px;font-size:8.6px;line-height:11px;color:#a8a8a8;text-align:left;">Horizontal</div>
<div class="t" style="left:1398px;top:292.5px;font-size:8.6px;line-height:11px;color:#a8a8a8;text-align:left;">Vertical</div>
<div class="a" style="left:1341px;top:292px;width:1px;height:12px;background:#e0e0e0"></div>
<div class="a" style="left:1455px;top:292px;width:1px;height:12px;background:#e0e0e0"></div>
<svg style="left:0;top:0" width="1500" height="732"><rect x="1263.5" y="293.5" width="5" height="8" fill="none" stroke="#aaaaaa"/><path fill="none" d="M1269.5 292V304" stroke="#aaaaaa"/><path fill="none" d="M1271 295H1273V300H1271" stroke="#aaaaaa"/><path fill="none" d="M1376 299.5H1389" stroke="#aaaaaa"/><rect x="1379.5" y="293.5" width="6" height="5" fill="none" stroke="#aaaaaa"/><path fill="none" d="M1380 301A3 2 0 0 0 1385 301" stroke="#aaaaaa"/><path d="M1344 297H1349L1346.5 300Z" fill="#888"/><path d="M1458 297H1463L1460.5 300Z" fill="#888"/></svg>
<div class="t" style="left:1259px;top:348.5px;font-size:8.6px;line-height:11px;color:#333;text-align:left;">Width</div>
<div class="t" style="left:1259px;top:371.5px;font-size:8.6px;line-height:11px;color:#333;text-align:left;">Height</div>
<div class="a" style="left:1297px;top:345px;width:45px;height:18px;border:1px solid #ababab;background:#fff"></div>
<div class="t" style="left:1301px;top:348.5px;font-size:8.5px;line-height:11px;color:#222;text-align:left;">3.13 in</div>
<div class="a" style="left:1344px;top:345px;width:12px;height:9px;border:1px solid #cfcfcf;background:#f4f4f4"></div>
<div class="a" style="left:1344px;top:354px;width:12px;height:9px;border:1px solid #cfcfcf;background:#f4f4f4"></div>
<svg style="left:1346px;top:347px" width="9" height="15"><path d="M1.5 4.5L4 1.5L6.5 4.5Z" fill="#333"/><path d="M1.5 10.5L4 13.5L6.5 10.5Z" fill="#333"/></svg>
<div class="a" style="left:1297px;top:369px;width:45px;height:18px;border:1px solid #ababab;background:#fff"></div>
<div class="t" style="left:1301px;top:372.5px;font-size:8.5px;line-height:11px;color:#222;text-align:left;">3.13 in</div>
<div class="a" style="left:1344px;top:369px;width:12px;height:9px;border:1px solid #cfcfcf;background:#f4f4f4"></div>
<div class="a" style="left:1344px;top:378px;width:12px;height:9px;border:1px solid #cfcfcf;background:#f4f4f4"></div>
<svg style="left:1346px;top:371px" width="9" height="15"><path d="M1.5 4.5L4 1.5L6.5 4.5Z" fill="#333"/><path d="M1.5 10.5L4 13.5L6.5 10.5Z" fill="#333"/></svg>
<div class="a" style="left:1373px;top:349px;width:11px;height:11px;border:1px solid #555;background:#fff"></div>
<div class="t" style="left:1386px;top:349.0px;font-size:8.6px;line-height:11px;color:#333;text-align:left;">Lock Proportions</div>
<div class="t" style="left:1259px;top:428.5px;font-size:8.6px;line-height:11px;color:#333;text-align:left;">X</div>
<div class="t" style="left:1259px;top:448.5px;font-size:8.6px;line-height:11px;color:#333;text-align:left;">Y</div>
<div class="a" style="left:1297px;top:424px;width:45px;height:18px;border:1px solid #dcdcdc;background:#fff"></div>
<div class="t" style="left:1301px;top:427.5px;font-size:8.5px;line-height:11px;color:#a0a0a0;text-align:left;">3.48 in</div>
<div class="a" style="left:1344px;top:424px;width:12px;height:9px;border:1px solid #cfcfcf;background:#f4f4f4"></div>
<div class="a" style="left:1344px;top:433px;width:12px;height:9px;border:1px solid #cfcfcf;background:#f4f4f4"></div>
<svg style="left:1346px;top:426px" width="9" height="15"><path d="M1.5 4.5L4 1.5L6.5 4.5Z" fill="#333"/><path d="M1.5 10.5L4 13.5L6.5 10.5Z" fill="#333"/></svg>
<div class="a" style="left:1297px;top:447px;width:45px;height:18px;border:1px solid #dcdcdc;background:#fff"></div>
<div class="t" style="left:1301px;top:450.5px;font-size:8.5px;line-height:11px;color:#a0a0a0;text-align:left;">2.70 in</div>
<div class="a" style="left:1344px;top:447px;width:12px;height:9px;border:1px solid #cfcfcf;background:#f4f4f4"></div>
<div class="a" style="left:1344px;top:456px;width:12px;height:9px;border:1px solid #cfcfcf;background:#f4f4f4"></div>
<svg style="left:1346px;top:449px" width="9" height="15"><path d="M1.5 4.5L4 1.5L6.5 4.5Z" fill="#333"/><path d="M1.5 10.5L4 13.5L6.5 10.5Z" fill="#333"/></svg>
<div class="t" style="left:1259px;top:505.5px;font-size:8.6px;line-height:11px;color:#333;text-align:left;">Angle</div>
<div class="t" style="left:1259px;top:528.5px;font-size:8.6px;line-height:11px;color:#333;text-align:left;">Pin</div>
<div class="a" style="left:1297px;top:502px;width:45px;height:18px;border:1px solid #ababab;background:#fff"></div>
<div class="t" style="left:1301px;top:505.5px;font-size:8.5px;line-height:11px;color:#222;text-align:left;">0.00 rad</div>
<div class="a" style="left:1344px;top:502px;width:12px;height:9px;border:1px solid #cfcfcf;background:#f4f4f4"></div>
<div class="a" style="left:1344px;top:511px;width:12px;height:9px;border:1px solid #cfcfcf;background:#f4f4f4"></div>
<svg style="left:1346px;top:504px" width="9" height="15"><path d="M1.5 4.5L4 1.5L6.5 4.5Z" fill="#333"/><path d="M1.5 10.5L4 13.5L6.5 10.5Z" fill="#333"/></svg>
<div class="a" style="left:1297px;top:525px;width:138px;height:17px;border:1px solid #ababab;background:#fff"></div>
<div class="t" style="left:1300px;top:528.0px;font-size:8.7px;line-height:11px;color:#333;text-align:left;">Center-Center</div>
<svg style="left:1425px;top:532px" width="6" height="4"><path d="M0.5 0.5H4.5L2.5 2.5Z" fill="#555"/></svg>
<svg style="left:0;top:0" width="1500" height="732"><path d="M1262.5 564L1267.5 555V564Z" fill="none" stroke="#8cc4e0" stroke-width="0.9"/><path d="M1269 564V555L1274 564Z" fill="none" stroke="#2a7ab8" stroke-width="0.9"/><path fill="none" d="M1263.5 558Q1264 553.5 1268.5 553" stroke="#1a7ad0" stroke-width="1.5"/><path d="M1267 551L1270 553L1267 555Z" fill="#1a7ad0"/><path d="M1300.5 564L1305.5 555V564Z" fill="none" stroke="#2a7ab8" stroke-width="0.9"/><path d="M1307 564V555L1312 564Z" fill="none" stroke="#8cc4e0" stroke-width="0.9"/><path fill="none" d="M1311.5 558Q1311 553.5 1306.5 553" stroke="#1a7ad0" stroke-width="1.5"/><path d="M1308 551L1305 553L1308 555Z" fill="#1a7ad0"/><path d="M1338.5 555H1344V564Z" fill="none" stroke="#8cc4e0" stroke-width="0.9"/><path d="M1344.5 564V555L1349.5 564Z" fill="none" stroke="#2a7ab8" stroke-width="0.9"/><path fill="none" d="M1341 555Q1344 550 1348 554" stroke="#1a7ad0" stroke-width="1.5"/><path d="M1346.5 556L1349.5 553.5L1350 557Z" fill="#1a7ad0"/><path d="M1414.5 551.5L1423.5 556L1414.5 560.5Z" fill="none" stroke="#2a8ac0" stroke-width="0.9"/><path d="M1414.5 556.5L1423.5 556.5L1414.5 563Z" fill="none" stroke="#8cc4e0" stroke-width="0.9"/><path fill="none" d="M1426.5 553V562" stroke="#1a9a30" stroke-width="1.1"/><path d="M1424.8 554.5L1426.5 552L1428.2 554.5ZM1424.8 560.5L1426.5 563L1428.2 560.5Z" fill="#1a9a30"/><path d="M1452.5 564L1457.5 555V564Z" fill="none" stroke="#2a7ab8" stroke-width="0.9"/><path d="M1459 564V555L1464 564Z" fill="none" stroke="#8cc4e0" stroke-width="0.9"/><path fill="none" d="M1453 551.5H1463" stroke="#1a9a30" stroke-width="1.1"/><path d="M1454.5 549.8L1452 551.5L1454.5 553.2ZM1461.5 549.8L1464 551.5L1461.5 553.2Z" fill="#1a9a30"/></svg>
<div class="t" style="left:1372px;top:554.5px;font-size:8.6px;line-height:11px;color:#333;text-align:left;">Flip</div>
<div class="t" style="left:1166.0px;top:569.5px;width:200px;font-size:8.6px;line-height:11px;color:#333;text-align:center;">90° CW</div>
<div class="t" style="left:1205.0px;top:569.5px;width:200px;font-size:8.6px;line-height:11px;color:#333;text-align:center;">90° CCW</div>
<div class="t" style="left:1247.0px;top:569.5px;width:200px;font-size:8.6px;line-height:11px;color:#333;text-align:center;">180 °</div>
<div class="t" style="left:1318.0px;top:569.5px;width:200px;font-size:8.6px;line-height:11px;color:#333;text-align:center;">Vertical</div>
<div class="t" style="left:1440px;top:569.5px;font-size:8.6px;line-height:11px;color:#333;text-align:left;width:35px;overflow:hidden">Horizontal</div>
<svg style="left:0;top:0" width="1500" height="732"><rect x="1263.5" y="620.5" width="7" height="6" fill="none" stroke="#2a8ac0"/><rect x="1266.5" y="623.5" width="7" height="6" fill="none" stroke="#2a8ac0"/><circle cx="1263" cy="620" r="1.2" fill="#2c2"/><circle cx="1274" cy="620" r="1.2" fill="#2c2"/><circle cx="1263" cy="630" r="1.2" fill="#2c2"/><circle cx="1274" cy="630" r="1.2" fill="#2c2"/><rect x="1301.5" y="620.5" width="7" height="6" fill="none" stroke="#2a8ac0"/><rect x="1304.5" y="623.5" width="7" height="6" fill="none" stroke="#2a8ac0"/><circle cx="1301" cy="620" r="1.2" fill="#2c2"/><circle cx="1307" cy="620" r="1.2" fill="#2c2"/><circle cx="1301" cy="626" r="1.2" fill="#2c2"/><circle cx="1312" cy="630" r="1.2" fill="#2c2"/><circle cx="1305" cy="630" r="1.2" fill="#2c2"/><rect x="1337.5" y="619.5" width="12" height="12" fill="#fff" stroke="#2a8ac0"/><rect x="1340.5" y="622.5" width="4" height="4" fill="none" stroke="#2a8ac0"/><rect x="1342.5" y="624.5" width="4" height="4" fill="none" stroke="#2a8ac0"/><rect x="1348" y="619" width="2" height="2" fill="#e03030"/><path fill="none" d="M1379.5 625V622.5A2.5 2.5 0 0 1 1384.5 622.5V625" stroke="#8aa8c0" stroke-width="1.2"/><rect x="1378" y="625" width="8" height="6" fill="#8aa8c0"/><path fill="none" d="M1415.5 625V622.5A2.5 2.5 0 0 1 1420.5 622.5" stroke="#c8c8c8" stroke-width="1.2"/><rect x="1417" y="625" width="8" height="6" fill="#c8c8c8"/></svg>
<div class="t" style="left:1168.0px;top:636.5px;width:200px;font-size:8.6px;line-height:11px;color:#333;text-align:center;">Group</div>
<div class="t" style="left:1205.0px;top:636.5px;width:200px;font-size:8.6px;line-height:11px;color:#333;text-align:center;">UnGroup</div>
<div class="t" style="left:1244.0px;top:636.5px;width:200px;font-size:8.6px;line-height:11px;color:#333;text-align:center;">Edit</div>
<div class="t" style="left:1243.0px;top:647.5px;width:200px;font-size:8.6px;line-height:11px;color:#333;text-align:center;">Group</div>
<div class="t" style="left:1282.0px;top:636.5px;width:200px;font-size:8.6px;line-height:11px;color:#333;text-align:center;">Lock</div>
<div class="t" style="left:1321.0px;top:636.5px;width:200px;font-size:8.6px;line-height:11px;color:#333;text-align:center;">UnLock</div>
<svg style="left:0;top:0" width="1500" height="732"><rect x="1263.5" y="695.5" width="10" height="10" fill="#ddd" stroke="#bbb"/><rect x="1266.5" y="698.5" width="4" height="4" fill="#fff" stroke="#bbb"/><rect x="1300.5" y="699.5" width="11" height="6" fill="#ddd" stroke="#bbb"/><path fill="none" d="M1301 696H1311" stroke="#bbb" stroke-dasharray="1.5 1"/><rect x="1343.5" y="694.5" width="6" height="12" fill="#ddd" stroke="#bbb"/><path fill="none" d="M1339 695V706" stroke="#bbb" stroke-dasharray="1.5 1"/></svg>
<div class="t" style="left:5px;top:714.5px;font-size:9.2px;line-height:12px;color:#fff;text-align:left;">Ready</div>
<div class="t" style="left:496px;top:714.5px;font-size:9.4px;line-height:12px;color:#fff;text-align:left;">Mouse: [ 5.36, 1.14 ] in</div>
<div class="t" style="left:660px;top:714.5px;font-size:9.4px;line-height:12px;color:#fff;text-align:left;">Width: 3.13 in;&nbsp; Height: 3.13 in;&nbsp; Angle: 0.00 rad</div>
<div class="t" style="left:1230px;top:715.0px;font-size:8.6px;line-height:11px;color:#fff;text-align:left;">ID: 538008</div>
<div class="a" style="left:1319px;top:713px;width:19px;height:15px;background:#f0a284"></div>
<svg style="left:0;top:0" width="1500" height="732"><path fill="none" d="M1284 721L1286 724L1290 725L1292 721V716.5M1286 720V715.5M1288 720V714.5M1290 720V715.5M1292 721V717M1286 720L1283.5 718" stroke="#fff" stroke-width="1.3"/><rect x="1301.5" y="714.5" width="8" height="8" fill="none" stroke="#fff" stroke-dasharray="1.5 1"/><circle cx="1309" cy="722" r="2.5" fill="#d24726" stroke="#fff" stroke-width="1.1"/><path fill="none" d="M1311 724L1313.5 726.5" stroke="#fff" stroke-width="1.3"/><rect x="1325.5" y="716.5" width="6" height="9" fill="#fff" stroke="#f0a284"/><path fill="none" d="M1322 720.5H1324M1333 720.5H1335M1328.5 714V715M1328.5 726V727" stroke="#fff"/><path fill="none" d="M1342 720.5H1346M1350 720.5H1428M1431 720.5H1438M1434.5 717V724" stroke="#fff" stroke-width="1.2"/><rect x="1390" y="716" width="2" height="9" fill="#fff"/></svg>
<div class="t" style="left:1451px;top:715.0px;font-size:8.7px;line-height:11px;color:#fff;text-align:left;">142%</div>
</body></html>
